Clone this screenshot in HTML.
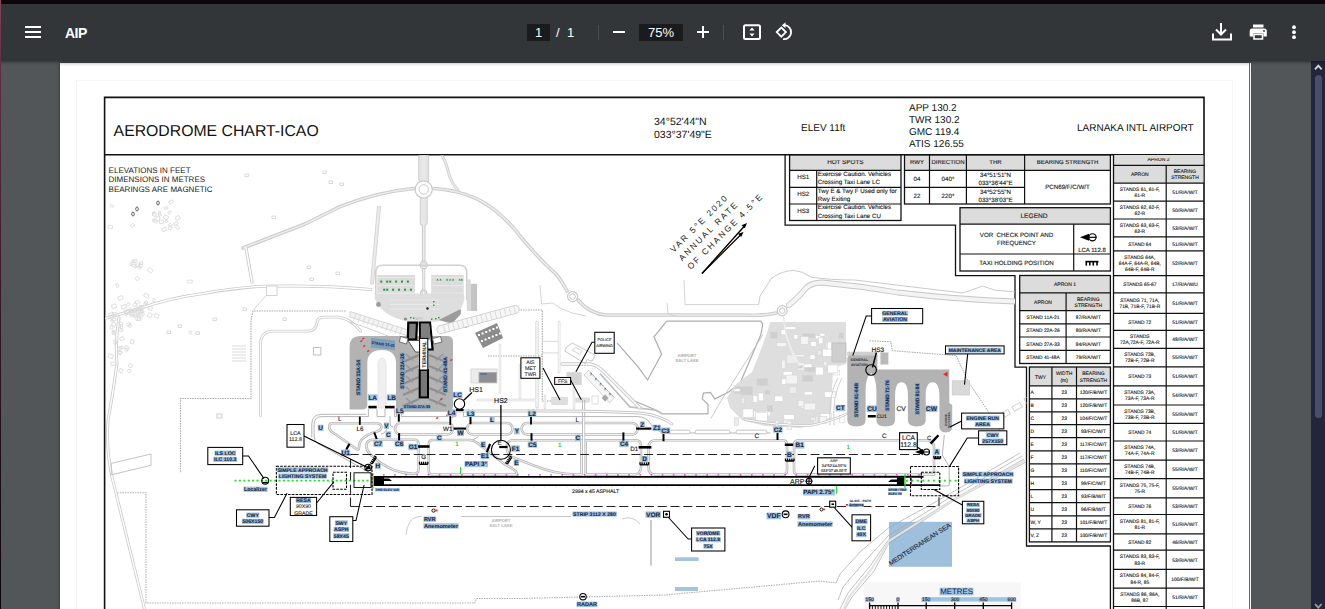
<!DOCTYPE html>
<html><head><meta charset="utf-8"><title>AIP</title>
<style>
html,body{margin:0;padding:0;width:1325px;height:609px;overflow:hidden;background:#525659;font-family:"Liberation Sans",sans-serif;}
#topbar{position:absolute;left:0;top:0;width:1325px;height:4px;background:#0d070b;}
#leftedge{position:absolute;left:0;top:0;width:1px;height:609px;background:linear-gradient(#8a4258,#6a2c42 60px,#3a1824 300px,#0a0507);z-index:9;}
#toolbar{position:absolute;left:0;top:4px;width:1325px;height:57px;background:#323639;box-shadow:0 1px 3px rgba(0,0,0,.45);z-index:5;color:#fff;}
#toolbar .title{position:absolute;left:65px;top:21px;font-size:14px;font-weight:bold;letter-spacing:-0.5px;}
#page{position:absolute;left:60px;top:63px;width:1189px;height:560px;background:#fff;box-shadow:0 0 3px rgba(0,0,0,.5);}
#pedge{position:absolute;left:1249px;top:63px;width:1px;height:560px;background:#6a6a6a;border-right:1px solid #f2f2f2;}
#pgrad{position:absolute;left:60px;top:63px;width:1189px;height:4px;background:linear-gradient(#e9e9e9,#fff);}
#scroll{position:absolute;left:1311px;top:61px;width:14px;height:548px;background:#23263a;}
#thumb{position:absolute;left:4px;top:14px;width:7px;height:343px;border-radius:3.5px;background:#4a4e6b;}
.tb{position:absolute;font-size:13px;color:#fff;}
.box{position:absolute;background:#191b1c;color:#fff;font-size:13px;text-align:center;}
svg{position:absolute;left:0;top:0;}
</style></head><body>
<div id="topbar"></div><div id="leftedge"></div>
<div id="page"></div><div id="pedge"></div><div id="pgrad"></div>
<!--CHART-->
<svg id="chart" width="1325" height="609" viewBox="0 0 1325 609" font-family="Liberation Sans, sans-serif" text-rendering="geometricPrecision">
<rect x="76.5" y="80.5" width="1156.0" height="559.5" fill="none" stroke="#f6f6f6" stroke-width="1" />
<rect x="863.5" y="582.0" width="157.2" height="27.0" fill="#f7f7f7" stroke="none" stroke-width="1" />
<path d="M104.6 609V97.4H1204V609" stroke="#111" stroke-width="1.6" fill="none" />
<path d="M104.6 154.8L1204.0 154.8" stroke="#111" stroke-width="1.6" fill="none" />
<text x="113.6" y="136.2" font-size="15.8" text-anchor="start" fill="#111" >AERODROME CHART-ICAO</text>
<text x="654.0" y="125.3" font-size="10.5" text-anchor="start" fill="#111" >34°52'44"N</text>
<text x="654.0" y="138.1" font-size="10.5" text-anchor="start" fill="#111" >033°37'49"E</text>
<text x="801.0" y="130.8" font-size="10" text-anchor="start" fill="#111" >ELEV 11ft</text>
<text x="909.0" y="111.2" font-size="10" text-anchor="start" fill="#111" >APP 130.2</text>
<text x="909.0" y="123.2" font-size="10" text-anchor="start" fill="#111" >TWR 130.2</text>
<text x="909.0" y="135.2" font-size="10" text-anchor="start" fill="#111" >GMC 119.4</text>
<text x="909.0" y="147.2" font-size="10" text-anchor="start" fill="#111" >ATIS 126.55</text>
<text x="1077.0" y="131.0" font-size="10" text-anchor="start" fill="#111" >LARNAKA INTL AIRPORT</text>
<text x="108.6" y="172.8" font-size="8" text-anchor="start" fill="#222" >ELEVATIONS IN FEET</text>
<text x="108.6" y="182.3" font-size="8" text-anchor="start" fill="#222" >DIMENSIONS IN METRES</text>
<text x="108.6" y="191.8" font-size="8" text-anchor="start" fill="#222" >BEARINGS ARE MAGNETIC</text>
<path d="M785.1 154.8V225.2H955.5V275.6H1015V367.2H1026.5V546H1110.400V609" stroke="#111" stroke-width="1.3" fill="none" />
<rect x="789.6" y="155.0" width="111.4" height="15.3" fill="#dcdcdc" stroke="none" stroke-width="1" />
<rect x="789.6" y="155.0" width="111.4" height="65.5" fill="none" stroke="#111" stroke-width="1.3" />
<path d="M789.6 170.3L901.0 170.3" stroke="#111" stroke-width="1.2" fill="none" />
<path d="M789.6 187.4L901.0 187.4" stroke="#111" stroke-width="1.2" fill="none" />
<path d="M789.6 204.0L901.0 204.0" stroke="#111" stroke-width="1.2" fill="none" />
<path d="M816.7 170.3L816.7 220.5" stroke="#111" stroke-width="1.2" fill="none" />
<text x="803.2" y="179.0" font-size="6.2" text-anchor="middle" fill="#222" stroke="#222" stroke-width="0.13" >HS1</text>
<text x="817.8" y="175.8" font-size="6.2" text-anchor="start" fill="#222" stroke="#222" stroke-width="0.13" >Exercise Caution. Vehicles</text>
<text x="817.8" y="183.9" font-size="6.2" text-anchor="start" fill="#222" stroke="#222" stroke-width="0.13" >Crossing Taxi Lane LC</text>
<text x="803.2" y="195.8" font-size="6.2" text-anchor="middle" fill="#222" stroke="#222" stroke-width="0.13" >HS2</text>
<text x="817.8" y="192.6" font-size="6.2" text-anchor="start" fill="#222" stroke="#222" stroke-width="0.13" >Twy E &amp; Twy F Used only for</text>
<text x="817.8" y="200.7" font-size="6.2" text-anchor="start" fill="#222" stroke="#222" stroke-width="0.13" >Rwy Exiting</text>
<text x="803.2" y="212.6" font-size="6.2" text-anchor="middle" fill="#222" stroke="#222" stroke-width="0.13" >HS3</text>
<text x="817.8" y="209.4" font-size="6.2" text-anchor="start" fill="#222" stroke="#222" stroke-width="0.13" >Exercise Caution. Vehicles</text>
<text x="817.8" y="217.5" font-size="6.2" text-anchor="start" fill="#222" stroke="#222" stroke-width="0.13" >Crossing Taxi Lane CU</text>
<rect x="904.5" y="155.0" width="205.9" height="15.3" fill="#dcdcdc" stroke="none" stroke-width="1" />
<rect x="904.5" y="155.0" width="205.9" height="49.0" fill="none" stroke="#111" stroke-width="1.3" />
<path d="M904.5 170.3L1110.4 170.3" stroke="#111" stroke-width="1.2" fill="none" />
<path d="M904.5 187.4L1024.6 187.4" stroke="#111" stroke-width="1.2" fill="none" />
<path d="M929.5 155.0L929.5 204.0" stroke="#111" stroke-width="1.2" fill="none" />
<path d="M966.4 155.0L966.4 204.0" stroke="#111" stroke-width="1.2" fill="none" />
<path d="M1024.6 155.0L1024.6 204.0" stroke="#111" stroke-width="1.2" fill="none" />
<text x="917.0" y="181.3" font-size="6.2" text-anchor="middle" fill="#222" stroke="#222" stroke-width="0.13" >04</text>
<text x="948.0" y="181.3" font-size="6.2" text-anchor="middle" fill="#222" stroke="#222" stroke-width="0.13" >040°</text>
<text x="995.5" y="177.3" font-size="6.2" text-anchor="middle" fill="#222" stroke="#222" stroke-width="0.13" >34°51'51"N</text>
<text x="995.5" y="185.3" font-size="6.2" text-anchor="middle" fill="#222" stroke="#222" stroke-width="0.13" >033°36'44"E</text>
<text x="917.0" y="198.3" font-size="6.2" text-anchor="middle" fill="#222" stroke="#222" stroke-width="0.13" >22</text>
<text x="948.0" y="198.3" font-size="6.2" text-anchor="middle" fill="#222" stroke="#222" stroke-width="0.13" >220°</text>
<text x="995.5" y="194.3" font-size="6.2" text-anchor="middle" fill="#222" stroke="#222" stroke-width="0.13" >34°52'55"N</text>
<text x="995.5" y="202.3" font-size="6.2" text-anchor="middle" fill="#222" stroke="#222" stroke-width="0.13" >033°38'03"E</text>
<text x="1067.5" y="189.3" font-size="6.2" text-anchor="middle" fill="#222" stroke="#222" stroke-width="0.13" >PCN69/F/C/W/T</text>
<rect x="960.0" y="207.7" width="150.4" height="16.4" fill="#dcdcdc" stroke="none" stroke-width="1" />
<rect x="960.0" y="207.7" width="150.4" height="63.3" fill="none" stroke="#111" stroke-width="1.3" />
<path d="M960.0 224.1L1110.4 224.1" stroke="#111" stroke-width="1.2" fill="none" />
<path d="M960.0 254.0L1110.4 254.0" stroke="#111" stroke-width="1.2" fill="none" />
<path d="M1073.7 224.1L1073.7 271.0" stroke="#111" stroke-width="1.2" fill="none" />
<text x="1034.0" y="218.2" font-size="6.6" text-anchor="middle" fill="#222" stroke="#222" stroke-width="0.13" >LEGEND</text>
<text x="1016.5" y="236.7" font-size="6.2" text-anchor="middle" fill="#222" stroke="#222" stroke-width="0.13" >VOR  CHECK POINT AND</text>
<text x="1016.5" y="245.0" font-size="6.2" text-anchor="middle" fill="#222" stroke="#222" stroke-width="0.13" >FREQUENCY</text>
<text x="1016.5" y="265.0" font-size="6.2" text-anchor="middle" fill="#222" stroke="#222" stroke-width="0.13" >TAXI HOLDING POSITION</text>
<text x="1092.0" y="252.0" font-size="6" text-anchor="middle" fill="#222" stroke="#222" stroke-width="0.13" >LCA 112.8</text>
<circle cx="1092.5" cy="237.3" r="3.6" fill="#fff" stroke="#000" stroke-width="1.1"/>
<path d="M1080 237.3L1089 233.8V240.8Z" stroke="none" stroke-width="1" fill="#000" />
<path d="M1086.0 237.3L1096.5 237.3" stroke="#000" stroke-width="1.2" fill="none" />
<path d="M1085.5 261.6L1098.5 261.6" stroke="#000" stroke-width="1.6" fill="none" />
<path d="M1086.3 261.6L1086.3 265.6" stroke="#000" stroke-width="1.6" fill="none" />
<path d="M1089.8 261.6L1089.8 265.6" stroke="#000" stroke-width="1.6" fill="none" />
<path d="M1093.3 261.6L1093.3 265.6" stroke="#000" stroke-width="1.6" fill="none" />
<path d="M1097.0 261.6L1097.0 265.6" stroke="#000" stroke-width="1.6" fill="none" />
<rect x="1019.7" y="275.5" width="90.7" height="35.1" fill="#dcdcdc" stroke="none" stroke-width="1" />
<rect x="1019.7" y="275.5" width="90.7" height="88.0" fill="none" stroke="#111" stroke-width="1.3" />
<path d="M1019.7 292.9L1110.4 292.9" stroke="#111" stroke-width="1.2" fill="none" />
<path d="M1019.7 310.6L1110.4 310.6" stroke="#111" stroke-width="1.2" fill="none" />
<path d="M1019.7 323.8L1110.4 323.8" stroke="#111" stroke-width="1.2" fill="none" />
<path d="M1019.7 337.0L1110.4 337.0" stroke="#111" stroke-width="1.2" fill="none" />
<path d="M1019.7 350.3L1110.4 350.3" stroke="#111" stroke-width="1.2" fill="none" />
<path d="M1066.1 292.9L1066.1 363.5" stroke="#111" stroke-width="1.2" fill="none" />
<text x="1065.0" y="286.0" font-size="5" text-anchor="middle" fill="#222" stroke="#222" stroke-width="0.13" >APRON 1</text>
<text x="1043.0" y="303.6" font-size="5" text-anchor="middle" fill="#222" stroke="#222" stroke-width="0.13" >APRON</text>
<text x="1088.3" y="300.6" font-size="5" text-anchor="middle" fill="#222" stroke="#222" stroke-width="0.13" >BEARING</text>
<text x="1088.3" y="306.6" font-size="5" text-anchor="middle" fill="#222" stroke="#222" stroke-width="0.13" >STRENGTH</text>
<text x="1043.0" y="319.1" font-size="4.9" text-anchor="middle" fill="#222" stroke="#222" stroke-width="0.13" >STAND 11A-21</text>
<text x="1088.3" y="319.1" font-size="4.9" text-anchor="middle" fill="#222" stroke="#222" stroke-width="0.13" >87/R/A/W/T</text>
<text x="1043.0" y="332.3" font-size="4.9" text-anchor="middle" fill="#222" stroke="#222" stroke-width="0.13" >STAND 22A-26</text>
<text x="1088.3" y="332.3" font-size="4.9" text-anchor="middle" fill="#222" stroke="#222" stroke-width="0.13" >80/R/A/W/T</text>
<text x="1043.0" y="345.5" font-size="4.9" text-anchor="middle" fill="#222" stroke="#222" stroke-width="0.13" >STAND 27A-33</text>
<text x="1088.3" y="345.5" font-size="4.9" text-anchor="middle" fill="#222" stroke="#222" stroke-width="0.13" >84/R/A/W/T</text>
<text x="1043.0" y="358.7" font-size="4.9" text-anchor="middle" fill="#222" stroke="#222" stroke-width="0.13" >STAND 41-48A</text>
<text x="1088.3" y="358.7" font-size="4.9" text-anchor="middle" fill="#222" stroke="#222" stroke-width="0.13" >79/R/A/W/T</text>
<rect x="1029.4" y="367.0" width="81.0" height="18.8" fill="#dcdcdc" stroke="none" stroke-width="1" />
<rect x="1029.4" y="367.0" width="81.0" height="174.9" fill="none" stroke="#111" stroke-width="1.3" />
<path d="M1029.4 385.8L1110.4 385.8" stroke="#111" stroke-width="1.2" fill="none" />
<path d="M1029.4 398.8L1110.4 398.8" stroke="#111" stroke-width="1.2" fill="none" />
<path d="M1029.4 411.9L1110.4 411.9" stroke="#111" stroke-width="1.2" fill="none" />
<path d="M1029.4 424.6L1110.4 424.6" stroke="#111" stroke-width="1.2" fill="none" />
<path d="M1029.4 437.7L1110.4 437.7" stroke="#111" stroke-width="1.2" fill="none" />
<path d="M1029.4 450.8L1110.4 450.8" stroke="#111" stroke-width="1.2" fill="none" />
<path d="M1029.4 463.8L1110.4 463.8" stroke="#111" stroke-width="1.2" fill="none" />
<path d="M1029.4 476.9L1110.4 476.9" stroke="#111" stroke-width="1.2" fill="none" />
<path d="M1029.4 489.6L1110.4 489.6" stroke="#111" stroke-width="1.2" fill="none" />
<path d="M1029.4 502.7L1110.4 502.7" stroke="#111" stroke-width="1.2" fill="none" />
<path d="M1029.4 515.8L1110.4 515.8" stroke="#111" stroke-width="1.2" fill="none" />
<path d="M1029.4 528.8L1110.4 528.8" stroke="#111" stroke-width="1.2" fill="none" />
<path d="M1051.9 367.0L1051.9 541.9" stroke="#111" stroke-width="1.2" fill="none" />
<path d="M1076.5 367.0L1076.5 541.9" stroke="#111" stroke-width="1.2" fill="none" />
<text x="1040.6" y="378.8" font-size="5" text-anchor="middle" fill="#222" stroke="#222" stroke-width="0.13" >TWY</text>
<text x="1064.2" y="375.3" font-size="5" text-anchor="middle" fill="#222" stroke="#222" stroke-width="0.13" >WIDTH</text>
<text x="1064.2" y="381.5" font-size="5" text-anchor="middle" fill="#222" stroke="#222" stroke-width="0.13" >(m)</text>
<text x="1093.4" y="375.3" font-size="5" text-anchor="middle" fill="#222" stroke="#222" stroke-width="0.13" >BEARING</text>
<text x="1093.4" y="381.5" font-size="5" text-anchor="middle" fill="#222" stroke="#222" stroke-width="0.13" >STRENGTH</text>
<text x="1030.6" y="394.1" font-size="4.9" text-anchor="start" fill="#222" stroke="#222" stroke-width="0.13" >A</text>
<text x="1064.2" y="394.1" font-size="4.9" text-anchor="middle" fill="#222" stroke="#222" stroke-width="0.13" >23</text>
<text x="1093.4" y="394.1" font-size="4.9" text-anchor="middle" fill="#222" stroke="#222" stroke-width="0.13" >120/F/B/W/T</text>
<text x="1030.6" y="407.2" font-size="4.9" text-anchor="start" fill="#222" stroke="#222" stroke-width="0.13" >B</text>
<text x="1064.2" y="407.2" font-size="4.9" text-anchor="middle" fill="#222" stroke="#222" stroke-width="0.13" >23</text>
<text x="1093.4" y="407.2" font-size="4.9" text-anchor="middle" fill="#222" stroke="#222" stroke-width="0.13" >120/F/B/W/T</text>
<text x="1030.6" y="420.1" font-size="4.9" text-anchor="start" fill="#222" stroke="#222" stroke-width="0.13" >C</text>
<text x="1064.2" y="420.1" font-size="4.9" text-anchor="middle" fill="#222" stroke="#222" stroke-width="0.13" >23</text>
<text x="1093.4" y="420.1" font-size="4.9" text-anchor="middle" fill="#222" stroke="#222" stroke-width="0.13" >104/F/C/W/T</text>
<text x="1030.6" y="432.9" font-size="4.9" text-anchor="start" fill="#222" stroke="#222" stroke-width="0.13" >D</text>
<text x="1064.2" y="432.9" font-size="4.9" text-anchor="middle" fill="#222" stroke="#222" stroke-width="0.13" >23</text>
<text x="1093.4" y="432.9" font-size="4.9" text-anchor="middle" fill="#222" stroke="#222" stroke-width="0.13" >93/F/C/W/T</text>
<text x="1030.6" y="446.1" font-size="4.9" text-anchor="start" fill="#222" stroke="#222" stroke-width="0.13" >E</text>
<text x="1064.2" y="446.1" font-size="4.9" text-anchor="middle" fill="#222" stroke="#222" stroke-width="0.13" >23</text>
<text x="1093.4" y="446.1" font-size="4.9" text-anchor="middle" fill="#222" stroke="#222" stroke-width="0.13" >117/F/C/W/T</text>
<text x="1030.6" y="459.1" font-size="4.9" text-anchor="start" fill="#222" stroke="#222" stroke-width="0.13" >F</text>
<text x="1064.2" y="459.1" font-size="4.9" text-anchor="middle" fill="#222" stroke="#222" stroke-width="0.13" >23</text>
<text x="1093.4" y="459.1" font-size="4.9" text-anchor="middle" fill="#222" stroke="#222" stroke-width="0.13" >117/F/C/W/T</text>
<text x="1030.6" y="472.2" font-size="4.9" text-anchor="start" fill="#222" stroke="#222" stroke-width="0.13" >G</text>
<text x="1064.2" y="472.2" font-size="4.9" text-anchor="middle" fill="#222" stroke="#222" stroke-width="0.13" >23</text>
<text x="1093.4" y="472.2" font-size="4.9" text-anchor="middle" fill="#222" stroke="#222" stroke-width="0.13" >110/F/C/W/T</text>
<text x="1030.6" y="485.1" font-size="4.9" text-anchor="start" fill="#222" stroke="#222" stroke-width="0.13" >H</text>
<text x="1064.2" y="485.1" font-size="4.9" text-anchor="middle" fill="#222" stroke="#222" stroke-width="0.13" >23</text>
<text x="1093.4" y="485.1" font-size="4.9" text-anchor="middle" fill="#222" stroke="#222" stroke-width="0.13" >99/F/C/W/T</text>
<text x="1030.6" y="497.9" font-size="4.9" text-anchor="start" fill="#222" stroke="#222" stroke-width="0.13" >L</text>
<text x="1064.2" y="497.9" font-size="4.9" text-anchor="middle" fill="#222" stroke="#222" stroke-width="0.13" >23</text>
<text x="1093.4" y="497.9" font-size="4.9" text-anchor="middle" fill="#222" stroke="#222" stroke-width="0.13" >93/F/B/W/T</text>
<text x="1030.6" y="511.1" font-size="4.9" text-anchor="start" fill="#222" stroke="#222" stroke-width="0.13" >U</text>
<text x="1064.2" y="511.1" font-size="4.9" text-anchor="middle" fill="#222" stroke="#222" stroke-width="0.13" >23</text>
<text x="1093.4" y="511.1" font-size="4.9" text-anchor="middle" fill="#222" stroke="#222" stroke-width="0.13" >96/F/B/W/T</text>
<text x="1030.6" y="524.1" font-size="4.9" text-anchor="start" fill="#222" stroke="#222" stroke-width="0.13" >W, Y</text>
<text x="1064.2" y="524.1" font-size="4.9" text-anchor="middle" fill="#222" stroke="#222" stroke-width="0.13" >23</text>
<text x="1093.4" y="524.1" font-size="4.9" text-anchor="middle" fill="#222" stroke="#222" stroke-width="0.13" >101/F/B/W/T</text>
<text x="1030.6" y="537.1" font-size="4.9" text-anchor="start" fill="#222" stroke="#222" stroke-width="0.13" >V, Z</text>
<text x="1064.2" y="537.1" font-size="4.9" text-anchor="middle" fill="#222" stroke="#222" stroke-width="0.13" >23</text>
<text x="1093.4" y="537.1" font-size="4.9" text-anchor="middle" fill="#222" stroke="#222" stroke-width="0.13" >100/F/B/W/T</text>
<rect x="1113.5" y="155.0" width="89.9" height="28.1" fill="#dcdcdc" stroke="none" stroke-width="1" />
<path d="M1113.5 155.0L1113.5 609.0" stroke="#111" stroke-width="1.3" fill="none" />
<path d="M1113.5 165.4L1204.0 165.4" stroke="#111" stroke-width="1.2" fill="none" />
<path d="M1113.5 183.1L1204.0 183.1" stroke="#111" stroke-width="1.2" fill="none" />
<path d="M1113.5 201.2L1204.0 201.2" stroke="#111" stroke-width="1.2" fill="none" />
<path d="M1113.5 219.0L1204.0 219.0" stroke="#111" stroke-width="1.2" fill="none" />
<path d="M1113.5 236.9L1204.0 236.9" stroke="#111" stroke-width="1.2" fill="none" />
<path d="M1113.5 250.8L1204.0 250.8" stroke="#111" stroke-width="1.2" fill="none" />
<path d="M1113.5 275.6L1204.0 275.6" stroke="#111" stroke-width="1.2" fill="none" />
<path d="M1113.5 292.9L1204.0 292.9" stroke="#111" stroke-width="1.2" fill="none" />
<path d="M1113.5 313.3L1204.0 313.3" stroke="#111" stroke-width="1.2" fill="none" />
<path d="M1113.5 330.3L1204.0 330.3" stroke="#111" stroke-width="1.2" fill="none" />
<path d="M1113.5 348.4L1204.0 348.4" stroke="#111" stroke-width="1.2" fill="none" />
<path d="M1113.5 366.8L1204.0 366.8" stroke="#111" stroke-width="1.2" fill="none" />
<path d="M1113.5 385.8L1204.0 385.8" stroke="#111" stroke-width="1.2" fill="none" />
<path d="M1113.5 405.0L1204.0 405.0" stroke="#111" stroke-width="1.2" fill="none" />
<path d="M1113.5 423.4L1204.0 423.4" stroke="#111" stroke-width="1.2" fill="none" />
<path d="M1113.5 441.0L1204.0 441.0" stroke="#111" stroke-width="1.2" fill="none" />
<path d="M1113.5 460.2L1204.0 460.2" stroke="#111" stroke-width="1.2" fill="none" />
<path d="M1113.5 478.6L1204.0 478.6" stroke="#111" stroke-width="1.2" fill="none" />
<path d="M1113.5 497.8L1204.0 497.8" stroke="#111" stroke-width="1.2" fill="none" />
<path d="M1113.5 514.5L1204.0 514.5" stroke="#111" stroke-width="1.2" fill="none" />
<path d="M1113.5 533.8L1204.0 533.8" stroke="#111" stroke-width="1.2" fill="none" />
<path d="M1113.5 550.1L1204.0 550.1" stroke="#111" stroke-width="1.2" fill="none" />
<path d="M1113.5 569.3L1204.0 569.3" stroke="#111" stroke-width="1.2" fill="none" />
<path d="M1113.5 588.1L1204.0 588.1" stroke="#111" stroke-width="1.2" fill="none" />
<path d="M1113.5 606.5L1204.0 606.5" stroke="#111" stroke-width="1.2" fill="none" />
<path d="M1166.2 165.4L1166.2 609.0" stroke="#111" stroke-width="1.2" fill="none" />
<text x="1139.8" y="176.0" font-size="5" text-anchor="middle" fill="#222" stroke="#222" stroke-width="0.13" >APRON</text>
<text x="1185.0" y="172.9" font-size="5" text-anchor="middle" fill="#222" stroke="#222" stroke-width="0.13" >BEARING</text>
<text x="1185.0" y="179.1" font-size="5" text-anchor="middle" fill="#222" stroke="#222" stroke-width="0.13" >STRENGTH</text>
<text x="1139.8" y="190.9" font-size="4.9" text-anchor="middle" fill="#222" stroke="#222" stroke-width="0.13" >STANDS 61, 61-F,</text>
<text x="1139.8" y="197.0" font-size="4.9" text-anchor="middle" fill="#222" stroke="#222" stroke-width="0.13" >61-R</text>
<text x="1185.0" y="193.9" font-size="4.9" text-anchor="middle" fill="#222" stroke="#222" stroke-width="0.13" >51/R/A/W/T</text>
<text x="1139.8" y="208.8" font-size="4.9" text-anchor="middle" fill="#222" stroke="#222" stroke-width="0.13" >STANDS 62, 62-F,</text>
<text x="1139.8" y="214.9" font-size="4.9" text-anchor="middle" fill="#222" stroke="#222" stroke-width="0.13" >62-R</text>
<text x="1185.0" y="211.9" font-size="4.9" text-anchor="middle" fill="#222" stroke="#222" stroke-width="0.13" >50/R/A/W/T</text>
<text x="1139.8" y="226.7" font-size="4.9" text-anchor="middle" fill="#222" stroke="#222" stroke-width="0.13" >STANDS 63, 63-F,</text>
<text x="1139.8" y="232.8" font-size="4.9" text-anchor="middle" fill="#222" stroke="#222" stroke-width="0.13" >63-R</text>
<text x="1185.0" y="229.8" font-size="4.9" text-anchor="middle" fill="#222" stroke="#222" stroke-width="0.13" >53/R/A/W/T</text>
<text x="1139.8" y="245.6" font-size="4.9" text-anchor="middle" fill="#222" stroke="#222" stroke-width="0.13" >STAND 64</text>
<text x="1185.0" y="245.7" font-size="4.9" text-anchor="middle" fill="#222" stroke="#222" stroke-width="0.13" >51/R/A/W/T</text>
<text x="1139.8" y="258.9" font-size="4.9" text-anchor="middle" fill="#222" stroke="#222" stroke-width="0.13" >STANDS 64A,</text>
<text x="1139.8" y="265.0" font-size="4.9" text-anchor="middle" fill="#222" stroke="#222" stroke-width="0.13" >64A-F, 64A-R, 64B,</text>
<text x="1139.8" y="271.1" font-size="4.9" text-anchor="middle" fill="#222" stroke="#222" stroke-width="0.13" >64B-F, 64B-R</text>
<text x="1185.0" y="265.0" font-size="4.9" text-anchor="middle" fill="#222" stroke="#222" stroke-width="0.13" >52/R/A/W/T</text>
<text x="1139.8" y="286.0" font-size="4.9" text-anchor="middle" fill="#222" stroke="#222" stroke-width="0.13" >STANDS 65-67</text>
<text x="1185.0" y="286.1" font-size="4.9" text-anchor="middle" fill="#222" stroke="#222" stroke-width="0.13" >17/R/A/W/U</text>
<text x="1139.8" y="301.8" font-size="4.9" text-anchor="middle" fill="#222" stroke="#222" stroke-width="0.13" >STANDS 71, 71A,</text>
<text x="1139.8" y="307.9" font-size="4.9" text-anchor="middle" fill="#222" stroke="#222" stroke-width="0.13" >71B, 71B-F, 71B-R</text>
<text x="1185.0" y="304.9" font-size="4.9" text-anchor="middle" fill="#222" stroke="#222" stroke-width="0.13" >51/R/A/W/T</text>
<text x="1139.8" y="323.6" font-size="4.9" text-anchor="middle" fill="#222" stroke="#222" stroke-width="0.13" >STAND 72</text>
<text x="1185.0" y="323.6" font-size="4.9" text-anchor="middle" fill="#222" stroke="#222" stroke-width="0.13" >51/R/A/W/T</text>
<text x="1139.8" y="338.1" font-size="4.9" text-anchor="middle" fill="#222" stroke="#222" stroke-width="0.13" >STANDS</text>
<text x="1139.8" y="344.2" font-size="4.9" text-anchor="middle" fill="#222" stroke="#222" stroke-width="0.13" >72A,72A-F, 72A-R</text>
<text x="1185.0" y="341.2" font-size="4.9" text-anchor="middle" fill="#222" stroke="#222" stroke-width="0.13" >48/R/A/W/T</text>
<text x="1139.8" y="356.3" font-size="4.9" text-anchor="middle" fill="#222" stroke="#222" stroke-width="0.13" >STANDS 72B,</text>
<text x="1139.8" y="362.4" font-size="4.9" text-anchor="middle" fill="#222" stroke="#222" stroke-width="0.13" >72B-F, 72B-R</text>
<text x="1185.0" y="359.4" font-size="4.9" text-anchor="middle" fill="#222" stroke="#222" stroke-width="0.13" >55/R/A/W/T</text>
<text x="1139.8" y="378.1" font-size="4.9" text-anchor="middle" fill="#222" stroke="#222" stroke-width="0.13" >STAND 73</text>
<text x="1185.0" y="378.1" font-size="4.9" text-anchor="middle" fill="#222" stroke="#222" stroke-width="0.13" >51/R/A/W/T</text>
<text x="1139.8" y="394.1" font-size="4.9" text-anchor="middle" fill="#222" stroke="#222" stroke-width="0.13" >STANDS 73A,</text>
<text x="1139.8" y="400.2" font-size="4.9" text-anchor="middle" fill="#222" stroke="#222" stroke-width="0.13" >73A-F, 73A-R</text>
<text x="1185.0" y="397.2" font-size="4.9" text-anchor="middle" fill="#222" stroke="#222" stroke-width="0.13" >54/R/A/W/T</text>
<text x="1139.8" y="412.9" font-size="4.9" text-anchor="middle" fill="#222" stroke="#222" stroke-width="0.13" >STANDS 73B,</text>
<text x="1139.8" y="419.0" font-size="4.9" text-anchor="middle" fill="#222" stroke="#222" stroke-width="0.13" >73B-F, 73B-R</text>
<text x="1185.0" y="416.0" font-size="4.9" text-anchor="middle" fill="#222" stroke="#222" stroke-width="0.13" >55/R/A/W/T</text>
<text x="1139.8" y="434.0" font-size="4.9" text-anchor="middle" fill="#222" stroke="#222" stroke-width="0.13" >STAND 74</text>
<text x="1185.0" y="434.0" font-size="4.9" text-anchor="middle" fill="#222" stroke="#222" stroke-width="0.13" >51/R/A/W/T</text>
<text x="1139.8" y="449.3" font-size="4.9" text-anchor="middle" fill="#222" stroke="#222" stroke-width="0.13" >STANDS 74A,</text>
<text x="1139.8" y="455.4" font-size="4.9" text-anchor="middle" fill="#222" stroke="#222" stroke-width="0.13" >74A-F, 74A-R</text>
<text x="1185.0" y="452.4" font-size="4.9" text-anchor="middle" fill="#222" stroke="#222" stroke-width="0.13" >53/R/A/W/T</text>
<text x="1139.8" y="468.1" font-size="4.9" text-anchor="middle" fill="#222" stroke="#222" stroke-width="0.13" >STANDS 74B,</text>
<text x="1139.8" y="474.2" font-size="4.9" text-anchor="middle" fill="#222" stroke="#222" stroke-width="0.13" >74B-F, 74B-R</text>
<text x="1185.0" y="471.2" font-size="4.9" text-anchor="middle" fill="#222" stroke="#222" stroke-width="0.13" >55/R/A/W/T</text>
<text x="1139.8" y="486.9" font-size="4.9" text-anchor="middle" fill="#222" stroke="#222" stroke-width="0.13" >STANDS 75, 75-F,</text>
<text x="1139.8" y="493.0" font-size="4.9" text-anchor="middle" fill="#222" stroke="#222" stroke-width="0.13" >75-R</text>
<text x="1185.0" y="490.0" font-size="4.9" text-anchor="middle" fill="#222" stroke="#222" stroke-width="0.13" >55/R/A/W/T</text>
<text x="1139.8" y="507.9" font-size="4.9" text-anchor="middle" fill="#222" stroke="#222" stroke-width="0.13" >STAND 76</text>
<text x="1185.0" y="507.9" font-size="4.9" text-anchor="middle" fill="#222" stroke="#222" stroke-width="0.13" >53/R/A/W/T</text>
<text x="1139.8" y="522.9" font-size="4.9" text-anchor="middle" fill="#222" stroke="#222" stroke-width="0.13" >STANDS 81, 81-F,</text>
<text x="1139.8" y="529.0" font-size="4.9" text-anchor="middle" fill="#222" stroke="#222" stroke-width="0.13" >81-R</text>
<text x="1185.0" y="525.9" font-size="4.9" text-anchor="middle" fill="#222" stroke="#222" stroke-width="0.13" >51/R/A/W/T</text>
<text x="1139.8" y="543.7" font-size="4.9" text-anchor="middle" fill="#222" stroke="#222" stroke-width="0.13" >STAND 82</text>
<text x="1185.0" y="543.8" font-size="4.9" text-anchor="middle" fill="#222" stroke="#222" stroke-width="0.13" >46/R/A/W/T</text>
<text x="1139.8" y="558.4" font-size="4.9" text-anchor="middle" fill="#222" stroke="#222" stroke-width="0.13" >STANDS 83, 83-F,</text>
<text x="1139.8" y="564.5" font-size="4.9" text-anchor="middle" fill="#222" stroke="#222" stroke-width="0.13" >83-R</text>
<text x="1185.0" y="561.5" font-size="4.9" text-anchor="middle" fill="#222" stroke="#222" stroke-width="0.13" >53/R/A/W/T</text>
<text x="1139.8" y="577.4" font-size="4.9" text-anchor="middle" fill="#222" stroke="#222" stroke-width="0.13" >STANDS 84, 84-F,</text>
<text x="1139.8" y="583.5" font-size="4.9" text-anchor="middle" fill="#222" stroke="#222" stroke-width="0.13" >84-R, 85</text>
<text x="1185.0" y="580.5" font-size="4.9" text-anchor="middle" fill="#222" stroke="#222" stroke-width="0.13" >100/F/B/W/T</text>
<text x="1139.8" y="596.0" font-size="4.9" text-anchor="middle" fill="#222" stroke="#222" stroke-width="0.13" >STANDS 86, 86A,</text>
<text x="1139.8" y="602.1" font-size="4.9" text-anchor="middle" fill="#222" stroke="#222" stroke-width="0.13" >86B, 87</text>
<text x="1185.0" y="599.1" font-size="4.9" text-anchor="middle" fill="#222" stroke="#222" stroke-width="0.13" >51/R/A/W/T</text>
<clipPath id="clipH"><rect x="780" y="160.2" width="440" height="40"/></clipPath>
<g clip-path="url(#clipH)">
<text x="845.3" y="163.9" font-size="6.3" text-anchor="middle" fill="#222" stroke="#222" stroke-width="0.13" >HOT SPOTS</text>
<text x="917.0" y="163.9" font-size="6" text-anchor="middle" fill="#222" stroke="#222" stroke-width="0.13" >RWY</text>
<text x="948.0" y="163.9" font-size="6" text-anchor="middle" fill="#222" stroke="#222" stroke-width="0.13" >DIRECTION</text>
<text x="995.5" y="163.9" font-size="6" text-anchor="middle" fill="#222" stroke="#222" stroke-width="0.13" >THR</text>
<text x="1067.5" y="163.9" font-size="6" text-anchor="middle" fill="#222" stroke="#222" stroke-width="0.13" >BEARING STRENGTH</text>
</g>
<clipPath id="clipA2"><rect x="1113" y="158.200" width="92" height="10"/></clipPath>
<g clip-path="url(#clipA2)">
<text x="1158.5" y="160.6" font-size="5" text-anchor="middle" fill="#222" stroke="#222" stroke-width="0.13" >APRON 2</text>
</g>
<clipPath id="clipM"><path d="M105.4 155.6H785.1V225.2H955.5V275.6H1015V367.2H1026.5V546H1110.400V609H105.4Z"/></clipPath>
<g clip-path="url(#clipM)">
<rect x="889.0" y="521.8" width="63.0" height="45.0" fill="#9ec0dc" stroke="none" stroke-width="1" />
<path d="M243 248L305 224L340 206.700Q377 191.900 414 188.500" stroke="#cbcbcb" stroke-width="3.6" fill="none" stroke-linecap="round" stroke-linejoin="round"/>
<path d="M423.700 150V180" stroke="#cfcfcf" stroke-width="11" fill="none" stroke-linecap="round" stroke-linejoin="round"/>
<path d="M423.700 150V180" stroke="#cfcfcf" stroke-width="5" fill="none" stroke-linecap="round" stroke-linejoin="round"/>
<path d="M423.700 198V222" stroke="#cfcfcf" stroke-width="8" fill="none" stroke-linecap="round" stroke-linejoin="round"/>
<path d="M423.700 222V262" stroke="#cbcbcb" stroke-width="3.6" fill="none" stroke-linecap="round" stroke-linejoin="round"/>
<path d="M423.700 268V290" stroke="#cfcfcf" stroke-width="3.2" fill="none" stroke-linecap="round" stroke-linejoin="round"/>
<path d="M434 188.500Q458 190 478 199.300Q502 212 520 236Q540 260 556 274Q562 281 567 291" stroke="#cbcbcb" stroke-width="3.6" fill="none" stroke-linecap="round" stroke-linejoin="round"/>
<path d="M438.500 150Q446 160 448.400 172Q451 183 458 190" stroke="#cfcfcf" stroke-width="3" fill="none" stroke-linecap="round" stroke-linejoin="round"/>
<path d="M578 300Q590 314 606 315H744Q765 316 776 313" stroke="#cbcbcb" stroke-width="3.6" fill="none" stroke-linecap="round" stroke-linejoin="round"/>
<path d="M789 305Q800 296 806 288Q812 282.500 822 282.500Q860 286 898 292.500Q957 299.500 1016 301.500" stroke="#c6c6c6" stroke-width="5.8" fill="none" stroke-linecap="round" stroke-linejoin="round"/>
<path d="M789 305Q800 296 806 288Q812 282.500 822 282.500Q860 286 898 292.500Q957 299.500 1016 301.500" stroke="#cdcdcd" stroke-width="2.2" fill="none" stroke-linecap="round" stroke-linejoin="round"/>
<path d="M100 320L141 308Q170 298 203 293.500Q240 287 264 286.300Q320 285 371 289.500" stroke="#c9c9c9" stroke-width="3" fill="none" stroke-linecap="round" stroke-linejoin="round"/>
<path d="M119 318Q115 340 117 363Q112 400 108 420Q106 450 112 477L144.500 609" stroke="#c9c9c9" stroke-width="3" fill="none" stroke-linecap="round" stroke-linejoin="round"/>
<path d="M246 248L252 282" stroke="#c9c9c9" stroke-width="3.2" fill="none" stroke-linecap="round" stroke-linejoin="round"/>
<path d="M243 248L305 224L340 206.700Q377 191.900 414 188.500" stroke="#ececec" stroke-width="1.6" fill="none" stroke-linecap="round" stroke-linejoin="round"/>
<path d="M423.700 150V180" stroke="#e4e4e4" stroke-width="9" fill="none" stroke-linecap="round" stroke-linejoin="round"/>
<path d="M423.700 150V180" stroke="#e9e9e9" stroke-width="3" fill="none" stroke-linecap="round" stroke-linejoin="round"/>
<path d="M423.700 198V222" stroke="#e6e6e6" stroke-width="6" fill="none" stroke-linecap="round" stroke-linejoin="round"/>
<path d="M423.700 222V262" stroke="#ececec" stroke-width="1.6" fill="none" stroke-linecap="round" stroke-linejoin="round"/>
<path d="M423.700 268V290" stroke="#ececec" stroke-width="1.4" fill="none" stroke-linecap="round" stroke-linejoin="round"/>
<path d="M434 188.500Q458 190 478 199.300Q502 212 520 236Q540 260 556 274Q562 281 567 291" stroke="#ececec" stroke-width="1.6" fill="none" stroke-linecap="round" stroke-linejoin="round"/>
<path d="M438.500 150Q446 160 448.400 172Q451 183 458 190" stroke="#ececec" stroke-width="1.2" fill="none" stroke-linecap="round" stroke-linejoin="round"/>
<path d="M578 300Q590 314 606 315H744Q765 316 776 313" stroke="#ececec" stroke-width="1.6" fill="none" stroke-linecap="round" stroke-linejoin="round"/>
<path d="M789 305Q800 296 806 288Q812 282.500 822 282.500Q860 286 898 292.500Q957 299.500 1016 301.500" stroke="#f4f4f4" stroke-width="4.2" fill="none" stroke-linecap="round" stroke-linejoin="round"/>
<path d="M789 305Q800 296 806 288Q812 282.500 822 282.500Q860 286 898 292.500Q957 299.500 1016 301.500" stroke="#f4f4f4" stroke-width="0.8" fill="none" stroke-linecap="round" stroke-linejoin="round"/>
<path d="M100 320L141 308Q170 298 203 293.500Q240 287 264 286.300Q320 285 371 289.500" stroke="#fff" stroke-width="1.4" fill="none" stroke-linecap="round" stroke-linejoin="round"/>
<path d="M119 318Q115 340 117 363Q112 400 108 420Q106 450 112 477L144.500 609" stroke="#fff" stroke-width="1.4" fill="none" stroke-linecap="round" stroke-linejoin="round"/>
<path d="M246 248L252 282" stroke="#fff" stroke-width="1.5" fill="none" stroke-linecap="round" stroke-linejoin="round"/>
<circle cx="423.7" cy="189.4" r="8.6" fill="#fff" stroke="#c9c9c9" stroke-width="1.2"/>
<circle cx="423.7" cy="189.4" r="4.7" fill="#fff" stroke="#c9c9c9" stroke-width="1"/>
<circle cx="423.7" cy="265" r="3.6" fill="#fff" stroke="#c9c9c9" stroke-width="1.2"/>
<circle cx="423.7" cy="265" r="2.0" fill="#fff" stroke="#c9c9c9" stroke-width="1"/>
<circle cx="423.7" cy="292.9" r="3" fill="#fff" stroke="#c9c9c9" stroke-width="1.2"/>
<circle cx="423.7" cy="292.9" r="1.7" fill="#fff" stroke="#c9c9c9" stroke-width="1"/>
<circle cx="572.6" cy="296.6" r="5" fill="#fff" stroke="#c9c9c9" stroke-width="1.2"/>
<circle cx="572.6" cy="296.6" r="2.8" fill="#fff" stroke="#c9c9c9" stroke-width="1"/>
<circle cx="782.2" cy="310.6" r="5" fill="#fff" stroke="#c9c9c9" stroke-width="1.2"/>
<circle cx="782.2" cy="310.6" r="2.8" fill="#fff" stroke="#c9c9c9" stroke-width="1"/>
<path d="M377.500 206.700L380.500 206.700L373.500 284L370.500 284Z" stroke="#cdcdcd" stroke-width="0.8" fill="#ececec" />
<path d="M666.700 321.100H760.900L762.800 324.100L760.900 334.500L747.100 366.700L740.200 382.800L728.700 392L714.900 398.900L710.300 392.400L703.400 393.100L702.300 398.900L708 404.600V413.800H662.100L654 409.200L632.200 400" stroke="#adadad" stroke-width="1.2" fill="none" />
<path d="M666.700 321.100L654 336.800L661.600 354L647.600 380L637.900 366.700L617.200 343.200" stroke="#adadad" stroke-width="1.2" fill="none" />
<path d="M763 334.500L721 401L711 418.400" stroke="#c4c4c4" stroke-width="0.9" fill="none" />
<path d="M600 373.600L629.900 406.900L656.300 410.300L662.100 413.800" stroke="#c0c0c0" stroke-width="1.6" fill="none" />
<path d="M540 285L541.500 304L553 303L560 308L572 313L586 316" stroke="#cfcfcf" stroke-width="0.9" fill="none" />
<path d="M667 303L668 314L676 316" stroke="#cfcfcf" stroke-width="0.9" fill="none" />
<path d="M684 280L685 304.600H758.600" stroke="#cfcfcf" stroke-width="0.9" fill="none" />
<path d="M758.600 304.600L760 296L771.800 278Q782 271 793.500 270.300Q803 271 811.200 277.200Q830 280 854.500 280L962.900 293L982.600 286L994.400 290L1016 292" stroke="#c4c4c4" stroke-width="0.9" fill="none" />
<text x="687.0" y="357.0" font-size="4.2" text-anchor="middle" font-weight="bold" fill="#b2b2b2" stroke="#b2b2b2" stroke-width="0.08" >AIRPORT</text>
<text x="687.0" y="361.6" font-size="4.2" text-anchor="middle" font-weight="bold" fill="#b2b2b2" stroke="#b2b2b2" stroke-width="0.08" >SALT LAKE</text>
<text x="501.0" y="521.5" font-size="4.2" text-anchor="middle" font-weight="bold" fill="#b8b8b8" stroke="#b8b8b8" stroke-width="0.08" >AIRPORT</text>
<text x="501.0" y="526.5" font-size="4.2" text-anchor="middle" font-weight="bold" fill="#b8b8b8" stroke="#b8b8b8" stroke-width="0.08" >SALT LAKE</text>
<path d="M345.600 311H253L251 320V398.500H180.500V473" stroke="#a9a9a9" stroke-width="1.1" fill="none" stroke-dasharray="1.5 1"/>
<path d="M117.400 492.700H146V603H474.700L476.400 598.500H520L664.800 595L820 581L836.400 583" stroke="#b2b2b2" stroke-width="1.1" fill="none" stroke-dasharray="1.5 1"/>
<path d="M508 310H542.300V401H560" stroke="#a8a8a8" stroke-width="1.2" fill="none" stroke-dasharray="1.5 1"/>
<path d="M488 356H542" stroke="#a8a8a8" stroke-width="1.2" fill="none" stroke-dasharray="1.5 1"/>
<path d="M869.500 340.800L890.800 341.800L892.200 350.700L956.200 355.600L968 381.200L987.700 410.700L1000 430" stroke="#a6a6a6" stroke-width="1" fill="none" stroke-dasharray="1.5 1"/>
<path d="M260.600 415.500V343Q261 331.200 273.800 331.200H308Q316 331 317.200 322Q318 317.200 324 317.200H338Q350 318 360.700 331.200" stroke="#c9c9c9" stroke-width="2.8" fill="none" stroke-linecap="round" stroke-linejoin="round"/>
<path d="M260.600 415.500V343Q261 331.200 273.800 331.200H308Q316 331 317.200 322Q318 317.200 324 317.200H338Q350 318 360.700 331.200" stroke="#fff" stroke-width="1.2" fill="none" stroke-linecap="round" stroke-linejoin="round"/>
<rect x="313.5" y="347.5" width="7.4" height="7.5" fill="none" stroke="#c0c0c0" stroke-width="1" />
<rect x="217.0" y="414.0" width="5.0" height="4.0" fill="none" stroke="#c4c4c4" stroke-width="0.8" />
<path d="M111.300 463.400L151 454V465.300L111.300 474.800Z" stroke="#c4c4c4" stroke-width="1" fill="none" />
<rect x="130.2" y="312.1" width="4.0" height="2.1" fill="none" stroke="#dadada" stroke-width="0.800" transform="rotate(3 130.2 312.1)"/>
<rect x="130.5" y="310.5" width="3.5" height="2.1" fill="none" stroke="#dadada" stroke-width="0.800" transform="rotate(-5 130.5 310.5)"/>
<rect x="137.3" y="310.1" width="3.3" height="3.7" fill="none" stroke="#dadada" stroke-width="0.800" transform="rotate(-30 137.3 310.1)"/>
<rect x="135.6" y="317.3" width="4.8" height="3.2" fill="none" stroke="#dadada" stroke-width="0.800" transform="rotate(-8 135.6 317.3)"/>
<rect x="136.4" y="308.7" width="4.6" height="2.6" fill="none" stroke="#dadada" stroke-width="0.800" transform="rotate(-28 136.4 308.7)"/>
<rect x="140.0" y="312.5" width="4.4" height="2.4" fill="none" stroke="#dadada" stroke-width="0.800" transform="rotate(7 140.0 312.5)"/>
<rect x="126.2" y="304.6" width="3.6" height="2.1" fill="none" stroke="#dadada" stroke-width="0.800" transform="rotate(-35 126.2 304.6)"/>
<rect x="137.5" y="317.7" width="3.3" height="2.6" fill="none" stroke="#dadada" stroke-width="0.800" transform="rotate(7 137.5 317.7)"/>
<rect x="124.1" y="310.5" width="4.4" height="3.4" fill="none" stroke="#dadada" stroke-width="0.800" transform="rotate(-20 124.1 310.5)"/>
<rect x="121.0" y="305.7" width="4.6" height="3.5" fill="none" stroke="#dadada" stroke-width="0.800" transform="rotate(-17 121.0 305.7)"/>
<rect x="138.5" y="308.6" width="3.3" height="3.5" fill="none" stroke="#dadada" stroke-width="0.800" transform="rotate(-28 138.5 308.6)"/>
<rect x="129.9" y="309.1" width="4.0" height="3.5" fill="none" stroke="#dadada" stroke-width="0.800" transform="rotate(6 129.9 309.1)"/>
<rect x="139.8" y="305.3" width="4.1" height="3.2" fill="none" stroke="#dadada" stroke-width="0.800" transform="rotate(6 139.8 305.3)"/>
<rect x="112.7" y="312.1" width="4.8" height="2.9" fill="none" stroke="#dadada" stroke-width="0.800" transform="rotate(13 112.7 312.1)"/>
<rect x="148.9" y="312.5" width="3.9" height="4.0" fill="none" stroke="#dadada" stroke-width="0.800" transform="rotate(26 148.9 312.5)"/>
<rect x="130.7" y="314.8" width="4.0" height="2.0" fill="none" stroke="#dadada" stroke-width="0.800" transform="rotate(-3 130.7 314.8)"/>
<rect x="135.7" y="311.6" width="2.2" height="3.5" fill="none" stroke="#dadada" stroke-width="0.800" transform="rotate(-30 135.7 311.6)"/>
<rect x="133.2" y="315.0" width="4.6" height="2.2" fill="none" stroke="#dadada" stroke-width="0.800" transform="rotate(-4 133.2 315.0)"/>
<rect x="111.3" y="305.2" width="4.5" height="3.7" fill="none" stroke="#dadada" stroke-width="0.800" transform="rotate(-18 111.3 305.2)"/>
<rect x="124.1" y="311.9" width="4.7" height="3.9" fill="none" stroke="#dadada" stroke-width="0.800" transform="rotate(-28 124.1 311.9)"/>
<rect x="136.6" y="312.9" width="2.7" height="3.0" fill="none" stroke="#dadada" stroke-width="0.800" transform="rotate(7 136.6 312.9)"/>
<rect x="132.9" y="309.5" width="3.3" height="2.7" fill="none" stroke="#dadada" stroke-width="0.800" transform="rotate(5 132.9 309.5)"/>
<rect x="149.1" y="306.3" width="3.5" height="3.2" fill="none" stroke="#dadada" stroke-width="0.800" transform="rotate(14 149.1 306.3)"/>
<rect x="155.2" y="313.3" width="4.3" height="3.7" fill="none" stroke="#dadada" stroke-width="0.800" transform="rotate(24 155.2 313.3)"/>
<rect x="124.3" y="312.8" width="2.3" height="3.3" fill="none" stroke="#dadada" stroke-width="0.800" transform="rotate(-35 124.3 312.8)"/>
<rect x="139.9" y="310.7" width="2.5" height="2.7" fill="none" stroke="#dadada" stroke-width="0.800" transform="rotate(-36 139.9 310.7)"/>
<rect x="139.3" y="309.0" width="2.3" height="2.7" fill="none" stroke="#dadada" stroke-width="0.800" transform="rotate(-38 139.3 309.0)"/>
<rect x="143.7" y="303.1" width="2.4" height="2.5" fill="none" stroke="#dadada" stroke-width="0.800" transform="rotate(-12 143.7 303.1)"/>
<rect x="129.3" y="311.3" width="4.5" height="4.0" fill="none" stroke="#dadada" stroke-width="0.800" transform="rotate(-3 129.3 311.3)"/>
<rect x="128.4" y="309.3" width="2.3" height="2.7" fill="none" stroke="#dadada" stroke-width="0.800" transform="rotate(-19 128.4 309.3)"/>
<rect x="136.1" y="305.9" width="2.1" height="3.9" fill="none" stroke="#dadada" stroke-width="0.800" transform="rotate(2 136.1 305.9)"/>
<rect x="141.3" y="315.0" width="2.1" height="3.1" fill="none" stroke="#dadada" stroke-width="0.800" transform="rotate(38 141.3 315.0)"/>
<rect x="144.1" y="302.0" width="2.8" height="2.7" fill="none" stroke="#dadada" stroke-width="0.800" transform="rotate(-27 144.1 302.0)"/>
<rect x="134.9" y="301.7" width="4.3" height="2.7" fill="none" stroke="#dadada" stroke-width="0.800" transform="rotate(-22 134.9 301.7)"/>
<rect x="145.0" y="292.9" width="4.6" height="3.6" fill="none" stroke="#dadada" stroke-width="0.800" transform="rotate(25 145.0 292.9)"/>
<rect x="132.5" y="304.7" width="3.6" height="2.7" fill="none" stroke="#dadada" stroke-width="0.800" transform="rotate(-38 132.5 304.7)"/>
<rect x="141.8" y="309.8" width="2.8" height="3.4" fill="none" stroke="#dadada" stroke-width="0.800" transform="rotate(37 141.8 309.8)"/>
<rect x="108.5" y="313.6" width="5.0" height="3.9" fill="none" stroke="#dadada" stroke-width="0.800" transform="rotate(-11 108.5 313.6)"/>
<rect x="112.5" y="330.2" width="2.6" height="2.4" fill="none" stroke="#dadada" stroke-width="0.800" transform="rotate(10 112.5 330.2)"/>
<rect x="129.5" y="363.4" width="3.4" height="3.3" fill="none" stroke="#dadada" stroke-width="0.800" transform="rotate(24 129.5 363.4)"/>
<rect x="109.1" y="353.7" width="4.7" height="3.6" fill="none" stroke="#dadada" stroke-width="0.800" transform="rotate(20 109.1 353.7)"/>
<rect x="119.0" y="327.6" width="4.4" height="2.7" fill="none" stroke="#dadada" stroke-width="0.800" transform="rotate(24 119.0 327.6)"/>
<rect x="131.3" y="339.4" width="3.2" height="3.9" fill="none" stroke="#dadada" stroke-width="0.800" transform="rotate(18 131.3 339.4)"/>
<rect x="111.3" y="324.9" width="2.5" height="3.8" fill="none" stroke="#dadada" stroke-width="0.800" transform="rotate(25 111.3 324.9)"/>
<rect x="110.7" y="362.6" width="4.9" height="3.3" fill="none" stroke="#dadada" stroke-width="0.800" transform="rotate(-12 110.7 362.6)"/>
<rect x="120.7" y="325.1" width="2.0" height="3.9" fill="none" stroke="#dadada" stroke-width="0.800" transform="rotate(12 120.7 325.1)"/>
<rect x="120.2" y="368.4" width="3.3" height="3.7" fill="none" stroke="#dadada" stroke-width="0.800" transform="rotate(26 120.2 368.4)"/>
<rect x="112.3" y="331.6" width="2.9" height="2.5" fill="none" stroke="#dadada" stroke-width="0.800" transform="rotate(7 112.3 331.6)"/>
<rect x="113.5" y="340.6" width="2.4" height="3.8" fill="none" stroke="#dadada" stroke-width="0.800" transform="rotate(-12 113.5 340.6)"/>
<rect x="118.5" y="349.5" width="4.7" height="2.8" fill="none" stroke="#dadada" stroke-width="0.800" transform="rotate(33 118.5 349.5)"/>
<rect x="119.5" y="346.7" width="3.6" height="2.0" fill="none" stroke="#dadada" stroke-width="0.800" transform="rotate(-5 119.5 346.7)"/>
<rect x="111.6" y="318.2" width="4.4" height="2.3" fill="none" stroke="#dadada" stroke-width="0.800" transform="rotate(-2 111.6 318.2)"/>
<rect x="125.1" y="348.0" width="3.0" height="3.0" fill="none" stroke="#dadada" stroke-width="0.800" transform="rotate(4 125.1 348.0)"/>
<rect x="126.6" y="323.7" width="3.7" height="2.5" fill="none" stroke="#dadada" stroke-width="0.800" transform="rotate(-18 126.6 323.7)"/>
<rect x="126.3" y="345.4" width="3.7" height="3.5" fill="none" stroke="#dadada" stroke-width="0.800" transform="rotate(33 126.3 345.4)"/>
<rect x="118.1" y="351.1" width="3.5" height="3.0" fill="none" stroke="#dadada" stroke-width="0.800" transform="rotate(15 118.1 351.1)"/>
<rect x="118.3" y="346.8" width="3.4" height="3.9" fill="none" stroke="#dadada" stroke-width="0.800" transform="rotate(16 118.3 346.8)"/>
<rect x="128.9" y="368.9" width="2.8" height="3.1" fill="none" stroke="#dadada" stroke-width="0.800" transform="rotate(35 128.9 368.9)"/>
<rect x="128.0" y="325.4" width="2.4" height="2.9" fill="none" stroke="#dadada" stroke-width="0.800" transform="rotate(-34 128.0 325.4)"/>
<rect x="113.0" y="321.9" width="4.0" height="3.6" fill="none" stroke="#dadada" stroke-width="0.800" transform="rotate(32 113.0 321.9)"/>
<rect x="119.8" y="321.4" width="4.0" height="2.3" fill="none" stroke="#dadada" stroke-width="0.800" transform="rotate(31 119.8 321.4)"/>
<rect x="187.3" y="280.2" width="4.9" height="2.8" fill="none" stroke="#dadada" stroke-width="0.800" transform="rotate(-1 187.3 280.2)"/>
<rect x="189.2" y="331.1" width="2.5" height="2.9" fill="none" stroke="#dadada" stroke-width="0.800" transform="rotate(1 189.2 331.1)"/>
<rect x="135.1" y="278.2" width="3.0" height="3.4" fill="none" stroke="#dadada" stroke-width="0.800" transform="rotate(-38 135.1 278.2)"/>
<rect x="153.0" y="298.6" width="2.1" height="2.7" fill="none" stroke="#dadada" stroke-width="0.800" transform="rotate(10 153.0 298.6)"/>
<rect x="149.5" y="267.3" width="5.0" height="3.6" fill="none" stroke="#dadada" stroke-width="0.800" transform="rotate(38 149.5 267.3)"/>
<rect x="115.7" y="284.0" width="2.1" height="3.6" fill="none" stroke="#dadada" stroke-width="0.800" transform="rotate(-18 115.7 284.0)"/>
<rect x="117.8" y="297.0" width="4.7" height="3.6" fill="none" stroke="#dadada" stroke-width="0.800" transform="rotate(-19 117.8 297.0)"/>
<rect x="119.4" y="338.3" width="3.7" height="3.4" fill="none" stroke="#dadada" stroke-width="0.800" transform="rotate(-33 119.4 338.3)"/>
<rect x="111.8" y="319.1" width="3.3" height="2.1" fill="none" stroke="#dadada" stroke-width="0.800" transform="rotate(35 111.8 319.1)"/>
<rect x="137.6" y="266.4" width="2.3" height="3.7" fill="none" stroke="#dadada" stroke-width="0.800" transform="rotate(-35 137.6 266.4)"/>
<rect x="140.4" y="263.6" width="3.0" height="3.1" fill="none" stroke="#dadada" stroke-width="0.800" transform="rotate(34 140.4 263.6)"/>
<rect x="133.2" y="261.0" width="3.6" height="2.5" fill="none" stroke="#dadada" stroke-width="0.800" transform="rotate(-31 133.2 261.0)"/>
<rect x="131.9" y="260.4" width="2.6" height="2.6" fill="none" stroke="#dadada" stroke-width="0.800" transform="rotate(-16 131.9 260.4)"/>
<rect x="139.1" y="262.3" width="3.5" height="2.4" fill="none" stroke="#dadada" stroke-width="0.800" transform="rotate(-12 139.1 262.3)"/>
<rect x="130.2" y="262.0" width="2.0" height="3.5" fill="none" stroke="#dadada" stroke-width="0.800" transform="rotate(4 130.2 262.0)"/>
<rect x="132.3" y="263.8" width="4.8" height="2.2" fill="none" stroke="#dadada" stroke-width="0.800" transform="rotate(26 132.3 263.8)"/>
<rect x="135.2" y="264.0" width="4.5" height="2.8" fill="none" stroke="#dadada" stroke-width="0.800" transform="rotate(1 135.2 264.0)"/>
<rect x="169.3" y="225.6" width="3.0" height="3.7" fill="none" stroke="#dadada" stroke-width="0.800" transform="rotate(17 169.3 225.6)"/>
<rect x="167.8" y="212.3" width="3.0" height="2.1" fill="none" stroke="#dadada" stroke-width="0.800" transform="rotate(-30 167.8 212.3)"/>
<rect x="152.0" y="220.0" width="2.8" height="2.3" fill="none" stroke="#dadada" stroke-width="0.800" transform="rotate(-33 152.0 220.0)"/>
<rect x="173.6" y="223.0" width="4.0" height="2.6" fill="none" stroke="#dadada" stroke-width="0.800" transform="rotate(-21 173.6 223.0)"/>
<rect x="158.2" y="213.6" width="2.5" height="2.9" fill="none" stroke="#dadada" stroke-width="0.800" transform="rotate(-19 158.2 213.6)"/>
<rect x="176.9" y="225.4" width="3.6" height="2.5" fill="none" stroke="#dadada" stroke-width="0.800" transform="rotate(37 176.9 225.4)"/>
<rect x="158.7" y="211.2" width="2.0" height="2.8" fill="none" stroke="#dadada" stroke-width="0.800" transform="rotate(-2 158.7 211.2)"/>
<rect x="164.1" y="207.6" width="3.5" height="2.0" fill="none" stroke="#dadada" stroke-width="0.800" transform="rotate(-19 164.1 207.6)"/>
<rect x="152.5" y="212.2" width="2.1" height="2.0" fill="none" stroke="#dadada" stroke-width="0.800" transform="rotate(-16 152.5 212.2)"/>
<rect x="156.5" y="216.5" width="3.6" height="3.5" fill="none" stroke="#dadada" stroke-width="0.800" transform="rotate(13 156.5 216.5)"/>
<rect x="170.0" y="223.2" width="3.2" height="2.7" fill="none" stroke="#dadada" stroke-width="0.800" transform="rotate(39 170.0 223.2)"/>
<rect x="154.2" y="219.7" width="3.9" height="2.1" fill="none" stroke="#dadada" stroke-width="0.800" transform="rotate(27 154.2 219.7)"/>
<rect x="175.0" y="217.4" width="4.2" height="3.6" fill="none" stroke="#dadada" stroke-width="0.800" transform="rotate(-29 175.0 217.4)"/>
<rect x="164.7" y="214.6" width="4.5" height="3.6" fill="none" stroke="#dadada" stroke-width="0.800" transform="rotate(26 164.7 214.6)"/>
<rect x="161.7" y="228.6" width="4.0" height="3.4" fill="none" stroke="#dadada" stroke-width="0.800" transform="rotate(-22 161.7 228.6)"/>
<rect x="110.9" y="204.3" width="3.1" height="2.2" fill="none" stroke="#dadada" stroke-width="0.800" transform="rotate(27 110.9 204.3)"/>
<rect x="159.4" y="220.1" width="3.9" height="3.4" fill="none" stroke="#dadada" stroke-width="0.800" transform="rotate(-1 159.4 220.1)"/>
<rect x="108.3" y="225.5" width="4.2" height="3.0" fill="none" stroke="#dadada" stroke-width="0.800" transform="rotate(3 108.3 225.5)"/>
<rect x="168.7" y="202.1" width="4.2" height="2.5" fill="none" stroke="#dadada" stroke-width="0.800" transform="rotate(-34 168.7 202.1)"/>
<rect x="132.4" y="223.3" width="2.6" height="3.5" fill="none" stroke="#dadada" stroke-width="0.800" transform="rotate(38 132.4 223.3)"/>
<rect x="153.4" y="212.2" width="3.4" height="3.4" fill="none" stroke="#dadada" stroke-width="0.800" transform="rotate(21 153.4 212.2)"/>
<rect x="164.8" y="220.6" width="2.2" height="2.3" fill="none" stroke="#dadada" stroke-width="0.800" transform="rotate(-20 164.8 220.6)"/>
<rect x="266.5" y="286.0" width="10.5" height="9.5" fill="#fff" stroke="#cfcfcf" stroke-width="0.9" />
<path d="M266.0 295.5L253.0 310.5" stroke="#cfcfcf" stroke-width="0.9" fill="none" />
<ellipse cx="137" cy="209" rx="1.3" ry="2" fill="none" stroke="#444" stroke-width="0.8"/>
<ellipse cx="133" cy="214" rx="1.3" ry="2" fill="none" stroke="#444" stroke-width="0.8"/>
<ellipse cx="158" cy="203" rx="1.3" ry="2" fill="none" stroke="#444" stroke-width="0.8"/>
<rect x="323" y="171" width="3.5" height="2.5" fill="none" stroke="#d2d2d2" stroke-width="0.8"/>
<rect x="329" y="181" width="3.5" height="2.5" fill="none" stroke="#d2d2d2" stroke-width="0.8"/>
<rect x="340" y="183" width="3.5" height="2.5" fill="none" stroke="#d2d2d2" stroke-width="0.8"/>
<rect x="272" y="216" width="3.5" height="2.5" fill="none" stroke="#d2d2d2" stroke-width="0.8"/>
<rect x="245" y="174" width="3.5" height="2.5" fill="none" stroke="#d2d2d2" stroke-width="0.8"/>
<rect x="213" y="318" width="3.5" height="2.5" fill="none" stroke="#d2d2d2" stroke-width="0.8"/>
<rect x="243" y="308" width="3.5" height="2.5" fill="none" stroke="#d2d2d2" stroke-width="0.8"/>
<rect x="196" y="332" width="3.5" height="2.5" fill="none" stroke="#d2d2d2" stroke-width="0.8"/>
<rect x="283" y="318" width="3.5" height="2.5" fill="none" stroke="#d2d2d2" stroke-width="0.8"/>
<rect x="336" y="272" width="3.5" height="2.5" fill="none" stroke="#d2d2d2" stroke-width="0.8"/>
<rect x="307" y="266" width="3.5" height="2.5" fill="none" stroke="#d2d2d2" stroke-width="0.8"/>
<rect x="310" y="278" width="3.5" height="2.5" fill="none" stroke="#d2d2d2" stroke-width="0.8"/>
<rect x="178" y="325" width="3.5" height="2.5" fill="none" stroke="#d2d2d2" stroke-width="0.8"/>
<rect x="167" y="331" width="3.5" height="2.5" fill="none" stroke="#d2d2d2" stroke-width="0.8"/>
<path d="M232.0 346.0L246.0 346.0" stroke="#cfcfcf" stroke-width="0.8" fill="none" />
<path d="M232.0 349.0L246.0 349.0" stroke="#cfcfcf" stroke-width="0.8" fill="none" />
<path d="M232.0 352.0L246.0 352.0" stroke="#cfcfcf" stroke-width="0.8" fill="none" />
<path d="M232.0 355.0L246.0 355.0" stroke="#cfcfcf" stroke-width="0.8" fill="none" />
<path d="M232.0 358.0L246.0 358.0" stroke="#cfcfcf" stroke-width="0.8" fill="none" />
<path d="M232.0 361.0L246.0 361.0" stroke="#cfcfcf" stroke-width="0.8" fill="none" />
<path d="M836 583L840 574L861 551L889 527.500L939 500L1020 453" stroke="#a8a8a8" stroke-width="0.7" fill="none" />
<path d="M838 600L843 587L866 560L889 535L946 500L1022 456" stroke="#a8a8a8" stroke-width="0.7" fill="none" />
<path d="M840 609L848 593L870 566L889 539L952 500L1024 459" stroke="#a8a8a8" stroke-width="0.7" fill="none" />
<path d="M845 609L852 597L874 571L889 543L955 500L1026 462" stroke="#a8a8a8" stroke-width="0.7" fill="none" />
<path d="M842 612L849 597L872 568.500L889 541L953.500 500L1025 460.500" stroke="#e3e3e3" stroke-width="2" fill="none" />
<rect x="1012" y="407" width="9" height="5" fill="none" stroke="#cfcfcf" stroke-width="0.9" transform="rotate(-30 1012 407)"/>
<rect x="1000" y="414" width="9" height="5" fill="none" stroke="#cfcfcf" stroke-width="0.9" transform="rotate(-30 1000 414)"/>
<rect x="1024" y="399" width="9" height="5" fill="none" stroke="#cfcfcf" stroke-width="0.9" transform="rotate(-30 1024 399)"/>
<path d="M770 322H846V364L833 368L831 418L820 424L800 428L765 426L742 420L730 408L727 398L735 385L752 372L760 352L768 330Z" stroke="none" stroke-width="1" fill="#dedede" />
<rect x="781.8" y="378.9" width="11.3" height="5.5" fill="#ffffff" stroke="#d4d4d4" stroke-width="0.600"/>
<rect x="826.1" y="342.6" width="10.2" height="5.6" fill="#ffffff" stroke="#d4d4d4" stroke-width="0.600"/>
<rect x="819.2" y="333.2" width="5.7" height="3.1" fill="#ffffff" stroke="#d4d4d4" stroke-width="0.600"/>
<rect x="797.5" y="362.8" width="7.1" height="7.3" fill="#f4f4f4" stroke="#d4d4d4" stroke-width="0.600"/>
<rect x="800.5" y="405.5" width="3.6" height="2.7" fill="#f4f4f4" stroke="#d4d4d4" stroke-width="0.600"/>
<rect x="798.0" y="400.3" width="5.9" height="6.3" fill="#f4f4f4" stroke="#d4d4d4" stroke-width="0.600"/>
<rect x="789.1" y="386.7" width="7.5" height="6.8" fill="#ececec" stroke="#d4d4d4" stroke-width="0.600"/>
<rect x="804.0" y="363.9" width="8.0" height="8.6" fill="#ffffff" stroke="#d4d4d4" stroke-width="0.600"/>
<rect x="809.9" y="354.9" width="5.1" height="4.4" fill="#ffffff" stroke="#d4d4d4" stroke-width="0.600"/>
<rect x="793.9" y="334.6" width="4.0" height="4.4" fill="#ffffff" stroke="#d4d4d4" stroke-width="0.600"/>
<rect x="837.4" y="407.0" width="3.0" height="3.9" fill="#ffffff" stroke="#d4d4d4" stroke-width="0.600"/>
<rect x="783.7" y="420.1" width="6.6" height="3.0" fill="#f4f4f4" stroke="#d4d4d4" stroke-width="0.600"/>
<rect x="817.6" y="350.4" width="3.8" height="4.7" fill="#ececec" stroke="#d4d4d4" stroke-width="0.600"/>
<rect x="815.4" y="335.6" width="5.2" height="3.2" fill="#ffffff" stroke="#d4d4d4" stroke-width="0.600"/>
<rect x="783.1" y="371.7" width="9.1" height="3.7" fill="#ffffff" stroke="#d4d4d4" stroke-width="0.600"/>
<rect x="753.0" y="395.7" width="4.2" height="6.7" fill="#ffffff" stroke="#d4d4d4" stroke-width="0.600"/>
<rect x="775.4" y="421.0" width="3.0" height="8.1" fill="#ffffff" stroke="#d4d4d4" stroke-width="0.600"/>
<rect x="765.5" y="410.7" width="4.9" height="5.1" fill="#ffffff" stroke="#d4d4d4" stroke-width="0.600"/>
<rect x="802.6" y="333.8" width="11.9" height="3.9" fill="#cfcfcf" stroke="#d4d4d4" stroke-width="0.600"/>
<rect x="823.3" y="361.8" width="3.7" height="3.9" fill="#f4f4f4" stroke="#d4d4d4" stroke-width="0.600"/>
<rect x="800.4" y="336.5" width="8.3" height="7.9" fill="#f4f4f4" stroke="#d4d4d4" stroke-width="0.600"/>
<rect x="827.3" y="341.9" width="4.4" height="8.4" fill="#ffffff" stroke="#d4d4d4" stroke-width="0.600"/>
<rect x="813.3" y="416.2" width="4.8" height="8.7" fill="#ececec" stroke="#d4d4d4" stroke-width="0.600"/>
<rect x="798.4" y="365.3" width="3.9" height="2.8" fill="#cfcfcf" stroke="#d4d4d4" stroke-width="0.600"/>
<rect x="758.2" y="393.0" width="5.3" height="7.9" fill="#ffffff" stroke="#d4d4d4" stroke-width="0.600"/>
<rect x="786.0" y="375.0" width="11.4" height="8.9" fill="#f4f4f4" stroke="#d4d4d4" stroke-width="0.600"/>
<rect x="757.1" y="378.8" width="10.7" height="6.5" fill="#cfcfcf" stroke="#d4d4d4" stroke-width="0.600"/>
<rect x="755.4" y="413.7" width="9.7" height="2.9" fill="#ececec" stroke="#d4d4d4" stroke-width="0.600"/>
<rect x="781.0" y="329.9" width="4.6" height="4.9" fill="#ffffff" stroke="#d4d4d4" stroke-width="0.600"/>
<rect x="839.0" y="333.0" width="4.2" height="5.4" fill="#cfcfcf" stroke="#d4d4d4" stroke-width="0.600"/>
<rect x="804.3" y="391.7" width="8.3" height="3.4" fill="#ffffff" stroke="#d4d4d4" stroke-width="0.600"/>
<rect x="833.6" y="370.5" width="6.2" height="4.5" fill="#ffffff" stroke="#d4d4d4" stroke-width="0.600"/>
<rect x="734.3" y="386.3" width="7.3" height="7.2" fill="#cfcfcf" stroke="#d4d4d4" stroke-width="0.600"/>
<rect x="781.8" y="360.0" width="3.4" height="8.6" fill="#f4f4f4" stroke="#d4d4d4" stroke-width="0.600"/>
<rect x="819.3" y="413.7" width="6.2" height="7.0" fill="#ffffff" stroke="#d4d4d4" stroke-width="0.600"/>
<rect x="827.8" y="364.9" width="10.1" height="8.1" fill="#ffffff" stroke="#d4d4d4" stroke-width="0.600"/>
<rect x="733.6" y="388.9" width="6.4" height="2.6" fill="#ffffff" stroke="#d4d4d4" stroke-width="0.600"/>
<rect x="740.8" y="386.7" width="11.9" height="8.2" fill="#cfcfcf" stroke="#d4d4d4" stroke-width="0.600"/>
<rect x="774.7" y="396.0" width="8.2" height="5.4" fill="#ffffff" stroke="#d4d4d4" stroke-width="0.600"/>
<rect x="741.2" y="397.5" width="3.3" height="6.4" fill="#ececec" stroke="#d4d4d4" stroke-width="0.600"/>
<rect x="734.5" y="417.8" width="4.0" height="7.6" fill="#ececec" stroke="#d4d4d4" stroke-width="0.600"/>
<rect x="765.1" y="390.5" width="4.8" height="3.6" fill="#cfcfcf" stroke="#d4d4d4" stroke-width="0.600"/>
<rect x="804.6" y="367.3" width="11.0" height="4.6" fill="#cfcfcf" stroke="#d4d4d4" stroke-width="0.600"/>
<rect x="820.7" y="413.6" width="10.9" height="5.0" fill="#ffffff" stroke="#d4d4d4" stroke-width="0.600"/>
<rect x="833.3" y="344.6" width="4.2" height="4.8" fill="#ffffff" stroke="#d4d4d4" stroke-width="0.600"/>
<rect x="810.2" y="417.1" width="5.5" height="3.6" fill="#ececec" stroke="#d4d4d4" stroke-width="0.600"/>
<rect x="783.8" y="414.7" width="10.5" height="5.0" fill="#ffffff" stroke="#d4d4d4" stroke-width="0.600"/>
<rect x="786.3" y="354.9" width="10.6" height="8.9" fill="#ececec" stroke="#d4d4d4" stroke-width="0.600"/>
<rect x="767.2" y="405.2" width="5.5" height="6.4" fill="#cfcfcf" stroke="#d4d4d4" stroke-width="0.600"/>
<rect x="794.8" y="354.3" width="10.1" height="2.6" fill="#f4f4f4" stroke="#d4d4d4" stroke-width="0.600"/>
<rect x="776.6" y="342.6" width="9.9" height="4.2" fill="#f4f4f4" stroke="#d4d4d4" stroke-width="0.600"/>
<rect x="819.7" y="420.4" width="4.0" height="3.2" fill="#ffffff" stroke="#d4d4d4" stroke-width="0.600"/>
<rect x="804.1" y="403.1" width="11.6" height="6.9" fill="#f4f4f4" stroke="#d4d4d4" stroke-width="0.600"/>
<rect x="822.6" y="349.1" width="9.4" height="7.4" fill="#ffffff" stroke="#d4d4d4" stroke-width="0.600"/>
<rect x="810.6" y="341.6" width="5.5" height="4.7" fill="#ffffff" stroke="#d4d4d4" stroke-width="0.600"/>
<rect x="787.0" y="421.7" width="4.4" height="8.0" fill="#f4f4f4" stroke="#d4d4d4" stroke-width="0.600"/>
<rect x="741.6" y="415.4" width="9.5" height="3.3" fill="#ececec" stroke="#d4d4d4" stroke-width="0.600"/>
<rect x="753.7" y="411.0" width="3.1" height="6.1" fill="#ffffff" stroke="#d4d4d4" stroke-width="0.600"/>
<rect x="819.6" y="416.5" width="7.2" height="6.7" fill="#f4f4f4" stroke="#d4d4d4" stroke-width="0.600"/>
<rect x="742.9" y="408.9" width="10.2" height="8.5" fill="#ffffff" stroke="#d4d4d4" stroke-width="0.600"/>
<rect x="755.5" y="412.2" width="11.8" height="8.9" fill="#ffffff" stroke="#d4d4d4" stroke-width="0.600"/>
<rect x="839.4" y="415.4" width="5.4" height="7.2" fill="#ffffff" stroke="#d4d4d4" stroke-width="0.600"/>
<rect x="770.3" y="332.1" width="7.0" height="6.1" fill="#cfcfcf" stroke="#d4d4d4" stroke-width="0.600"/>
<rect x="785.6" y="326.8" width="10.3" height="2.9" fill="#ffffff" stroke="#d4d4d4" stroke-width="0.600"/>
<rect x="818.7" y="337.8" width="4.3" height="5.9" fill="#ffffff" stroke="#d4d4d4" stroke-width="0.600"/>
<rect x="824.4" y="391.6" width="11.5" height="5.7" fill="#ffffff" stroke="#d4d4d4" stroke-width="0.600"/>
<rect x="815.4" y="367.1" width="8.0" height="7.9" fill="#ffffff" stroke="#d4d4d4" stroke-width="0.600"/>
<rect x="802.3" y="375.2" width="10.6" height="6.1" fill="#cfcfcf" stroke="#d4d4d4" stroke-width="0.600"/>
<path d="M783.500 316L786 335L792 352L800 366" stroke="#fff" stroke-width="1.6" fill="none" />
<path d="M783.500 316L786 335L792 352L800 366" stroke="#d0d0d0" stroke-width="0.6" fill="none" />
<rect x="832.0" y="343.0" width="14.0" height="19.0" fill="#cfcfcf" stroke="#bdbdbd" stroke-width="0.8" />
<path d="M838 378Q828 395 830 425" stroke="#cfcfcf" stroke-width="1" fill="none" />
<path d="M842 378Q832 395 834 425" stroke="#cfcfcf" stroke-width="1" fill="none" />
<path d="M375.800 300V272Q376 265.300 383 265.300H460Q466.700 265.500 466.700 272V300" stroke="#d0d0d0" stroke-width="1.6" fill="none" />
<path d="M374.400 293.400H463.700Q466 300 461 308Q450 322 423 323Q398 322 385 312Q374 303 374.400 293.400Z" stroke="none" stroke-width="1" fill="#dedede" />
<rect x="377.3" y="275.0" width="37.7" height="18.4" fill="#dcdcdc" stroke="none" stroke-width="1" />
<rect x="431.2" y="275.0" width="32.5" height="22.8" fill="#dcdcdc" stroke="none" stroke-width="1" />
<rect x="466.7" y="279.4" width="4.1" height="31.6" fill="#dadada" stroke="none" stroke-width="1" />
<rect x="470.8" y="283.8" width="6.2" height="27.2" fill="#c4c4c4" stroke="none" stroke-width="1" />
<path d="M378.0 277.5L414.5 277.5" stroke="#ececec" stroke-width="0.7" fill="none" />
<path d="M432.0 277.5L463.0 277.5" stroke="#ececec" stroke-width="0.7" fill="none" />
<path d="M378.0 285.5L414.5 285.5" stroke="#ececec" stroke-width="0.7" fill="none" />
<path d="M432.0 285.5L463.0 285.5" stroke="#ececec" stroke-width="0.7" fill="none" />
<path d="M378.0 293.0L414.5 293.0" stroke="#ececec" stroke-width="0.7" fill="none" />
<path d="M432.0 293.0L463.0 293.0" stroke="#ececec" stroke-width="0.7" fill="none" />
<path d="M390.0 300.0L440.0 300.0" stroke="#ececec" stroke-width="0.7" fill="none" />
<path d="M390.0 304.5L440.0 304.5" stroke="#ececec" stroke-width="0.7" fill="none" />
<path d="M390.0 309.0L440.0 309.0" stroke="#ececec" stroke-width="0.7" fill="none" />
<rect x="380.3" y="280.6" width="2.0" height="2.0" fill="#1f9a3a" stroke="none" stroke-width="1" />
<rect x="386.2" y="280.6" width="2.0" height="2.0" fill="#1f9a3a" stroke="none" stroke-width="1" />
<rect x="389.2" y="280.6" width="2.0" height="2.0" fill="#1f9a3a" stroke="none" stroke-width="1" />
<rect x="395.1" y="280.6" width="2.0" height="2.0" fill="#1f9a3a" stroke="none" stroke-width="1" />
<rect x="401.0" y="280.6" width="2.0" height="2.0" fill="#1f9a3a" stroke="none" stroke-width="1" />
<rect x="406.9" y="280.6" width="2.0" height="2.0" fill="#1f9a3a" stroke="none" stroke-width="1" />
<rect x="383.2" y="288.7" width="2.0" height="2.0" fill="#1f9a3a" stroke="none" stroke-width="1" />
<rect x="386.2" y="288.7" width="2.0" height="2.0" fill="#1f9a3a" stroke="none" stroke-width="1" />
<rect x="392.1" y="288.7" width="2.0" height="2.0" fill="#1f9a3a" stroke="none" stroke-width="1" />
<rect x="398.0" y="288.7" width="2.0" height="2.0" fill="#1f9a3a" stroke="none" stroke-width="1" />
<rect x="404.0" y="288.7" width="2.0" height="2.0" fill="#1f9a3a" stroke="none" stroke-width="1" />
<rect x="409.9" y="288.7" width="2.0" height="2.0" fill="#1f9a3a" stroke="none" stroke-width="1" />
<path d="M436.4 280.400l1.100 -2l1.100 2z" stroke="none" stroke-width="1" fill="#1f9a3a" />
<path d="M439.4 280.400l1.100 -2l1.100 2z" stroke="none" stroke-width="1" fill="#1f9a3a" />
<path d="M446 280.400l1.100 -2l1.100 2z" stroke="none" stroke-width="1" fill="#1f9a3a" />
<path d="M449 280.400l1.100 -2l1.100 2z" stroke="none" stroke-width="1" fill="#1f9a3a" />
<path d="M452 280.400l1.100 -2l1.100 2z" stroke="none" stroke-width="1" fill="#1f9a3a" />
<path d="M458.6 280.400l1.100 -2l1.100 2z" stroke="none" stroke-width="1" fill="#1f9a3a" />
<path d="M460.8 280.400l1.100 -2l1.100 2z" stroke="none" stroke-width="1" fill="#1f9a3a" />
<rect x="433.0" y="301.0" width="1.5" height="1.4" fill="#1f9a3a" stroke="none" stroke-width="1" />
<rect x="433.0" y="304.5" width="1.5" height="1.4" fill="#1f9a3a" stroke="none" stroke-width="1" />
<rect x="410.0" y="317.0" width="1.5" height="1.4" fill="#1f9a3a" stroke="none" stroke-width="1" />
<rect x="413.0" y="317.5" width="1.5" height="1.4" fill="#1f9a3a" stroke="none" stroke-width="1" />
<rect x="416.0" y="318.0" width="1.5" height="1.4" fill="#1f9a3a" stroke="none" stroke-width="1" />
<rect x="431.0" y="318.5" width="1.5" height="1.4" fill="#1f9a3a" stroke="none" stroke-width="1" />
<rect x="435.0" y="318.0" width="1.5" height="1.4" fill="#1f9a3a" stroke="none" stroke-width="1" />
<rect x="438.0" y="317.0" width="1.5" height="1.4" fill="#1f9a3a" stroke="none" stroke-width="1" />
<path d="M438.600 320L460.800 309V314L452 323.700Z" stroke="none" stroke-width="1" fill="#9c9c9c" />
<circle cx="378.500" cy="304.500" r="2.400" fill="#9a9a9a"/>
<circle cx="427.500" cy="308.500" r="1.200" fill="#222"/>
<circle cx="405.500" cy="319" r="1.600" fill="#8a8a8a"/>
<circle cx="466" cy="326" r="1.800" fill="#8a8a8a"/>
<rect x="414.5" y="317.0" width="8.5" height="2.5" fill="#cfcfcf" stroke="none" stroke-width="1" />
<path d="M350 311.500L408 330V336L350 317Z" stroke="#cdcdcd" stroke-width="0.8" fill="#f3f3f3" />
<path d="M356.0 313.5L353.5 320.5" stroke="#d2d2d2" stroke-width="0.7" fill="none" />
<path d="M360.6 315.0L358.1 322.0" stroke="#d2d2d2" stroke-width="0.7" fill="none" />
<path d="M365.2 316.5L362.7 323.5" stroke="#d2d2d2" stroke-width="0.7" fill="none" />
<path d="M369.8 318.0L367.3 325.0" stroke="#d2d2d2" stroke-width="0.7" fill="none" />
<path d="M374.4 319.5L371.9 326.5" stroke="#d2d2d2" stroke-width="0.7" fill="none" />
<path d="M379.0 321.0L376.5 328.0" stroke="#d2d2d2" stroke-width="0.7" fill="none" />
<path d="M383.6 322.5L381.1 329.5" stroke="#d2d2d2" stroke-width="0.7" fill="none" />
<path d="M388.2 324.0L385.7 331.0" stroke="#d2d2d2" stroke-width="0.7" fill="none" />
<path d="M392.8 325.5L390.3 332.5" stroke="#d2d2d2" stroke-width="0.7" fill="none" />
<path d="M397.4 327.0L394.9 334.0" stroke="#d2d2d2" stroke-width="0.7" fill="none" />
<path d="M402.0 328.5L399.5 335.5" stroke="#d2d2d2" stroke-width="0.7" fill="none" />
<path d="M350 322Q375 330 404 343" stroke="#c9c9c9" stroke-width="0.9" fill="none" />
<path d="M105 345L200 350" stroke="none" stroke-width="1" fill="none" />
<path d="M441 329.500L480 319L515 309.500" stroke="#c9c9c9" stroke-width="9" fill="none" stroke-linecap="round" stroke-linejoin="round"/>
<path d="M441 329.500L480 319L515 309.500" stroke="#f6f6f6" stroke-width="7.4" fill="none" stroke-linecap="round" stroke-linejoin="round"/>
<path d="M443.2 325.2L445.0 332.2" stroke="#cccccc" stroke-width="0.7" fill="none" />
<path d="M447.9 323.9L449.7 330.9" stroke="#cccccc" stroke-width="0.7" fill="none" />
<path d="M452.6 322.7L454.4 329.7" stroke="#cccccc" stroke-width="0.7" fill="none" />
<path d="M457.3 321.4L459.1 328.4" stroke="#cccccc" stroke-width="0.7" fill="none" />
<path d="M462.0 320.1L463.8 327.1" stroke="#cccccc" stroke-width="0.7" fill="none" />
<path d="M466.7 318.8L468.5 325.8" stroke="#cccccc" stroke-width="0.7" fill="none" />
<path d="M471.4 317.6L473.2 324.6" stroke="#cccccc" stroke-width="0.7" fill="none" />
<path d="M476.1 316.3L477.9 323.3" stroke="#cccccc" stroke-width="0.7" fill="none" />
<path d="M480.8 315.0L482.6 322.0" stroke="#cccccc" stroke-width="0.7" fill="none" />
<path d="M485.5 313.8L487.3 320.8" stroke="#cccccc" stroke-width="0.7" fill="none" />
<path d="M490.2 312.5L492.0 319.5" stroke="#cccccc" stroke-width="0.7" fill="none" />
<path d="M494.9 311.2L496.7 318.2" stroke="#cccccc" stroke-width="0.7" fill="none" />
<path d="M499.6 310.0L501.4 317.0" stroke="#cccccc" stroke-width="0.7" fill="none" />
<path d="M504.3 308.7L506.1 315.7" stroke="#cccccc" stroke-width="0.7" fill="none" />
<path d="M509.0 307.4L510.8 314.4" stroke="#cccccc" stroke-width="0.7" fill="none" />
<path d="M513.7 306.1L515.5 313.1" stroke="#cccccc" stroke-width="0.7" fill="none" />
<path d="M349.600 409.600V346Q350 336 360 336H448Q453 336.500 453 342V406Q453 411.700 447 411.700H400Q396 411.700 396 407V362Q395 350 382 350Q368 350 367.300 362V405Q367 409.600 362 409.600Z" stroke="none" stroke-width="1" fill="#b3b3b3" />
<path d="M378 408V364Q378.500 358 382 358Q385.500 358 386 364V408Z" stroke="#e2e2e2" stroke-width="0.8" fill="#efefef" />
<path d="M371 338L395 340.500V350L371 347.500Z" stroke="none" stroke-width="1" fill="#7f9fbd" />
<path d="M403.0 362.0L419.0 355.0" stroke="#8e8e8e" stroke-width="2.2" fill="none" />
<path d="M429.0 355.0L446.0 362.0" stroke="#8e8e8e" stroke-width="2.2" fill="none" />
<path d="M406.0 354.0L413.0 360.5" stroke="#979797" stroke-width="1.6" fill="none" />
<path d="M443.0 354.0L436.0 360.5" stroke="#979797" stroke-width="1.6" fill="none" />
<path d="M403.0 373.0L419.0 366.0" stroke="#8e8e8e" stroke-width="2.2" fill="none" />
<path d="M429.0 366.0L446.0 373.0" stroke="#8e8e8e" stroke-width="2.2" fill="none" />
<path d="M406.0 365.0L413.0 371.5" stroke="#979797" stroke-width="1.6" fill="none" />
<path d="M443.0 365.0L436.0 371.5" stroke="#979797" stroke-width="1.6" fill="none" />
<path d="M403.0 384.0L419.0 377.0" stroke="#8e8e8e" stroke-width="2.2" fill="none" />
<path d="M429.0 377.0L446.0 384.0" stroke="#8e8e8e" stroke-width="2.2" fill="none" />
<path d="M406.0 376.0L413.0 382.5" stroke="#979797" stroke-width="1.6" fill="none" />
<path d="M443.0 376.0L436.0 382.5" stroke="#979797" stroke-width="1.6" fill="none" />
<path d="M403.0 395.0L419.0 388.0" stroke="#8e8e8e" stroke-width="2.2" fill="none" />
<path d="M429.0 388.0L446.0 395.0" stroke="#8e8e8e" stroke-width="2.2" fill="none" />
<path d="M406.0 387.0L413.0 393.5" stroke="#979797" stroke-width="1.6" fill="none" />
<path d="M443.0 387.0L436.0 393.5" stroke="#979797" stroke-width="1.6" fill="none" />
<path d="M403.0 406.0L419.0 399.0" stroke="#8e8e8e" stroke-width="2.2" fill="none" />
<path d="M429.0 399.0L446.0 406.0" stroke="#8e8e8e" stroke-width="2.2" fill="none" />
<path d="M406.0 398.0L413.0 404.5" stroke="#979797" stroke-width="1.6" fill="none" />
<path d="M443.0 398.0L436.0 404.5" stroke="#979797" stroke-width="1.6" fill="none" />
<path d="M408.300 322.700L417 322.700L416.200 339.500L407.800 339.500Z" stroke="#000" stroke-width="2.2" fill="#808080" />
<path d="M419.800 322.700L430 322.700L432.600 349.500L428 349.500L420.500 349.500Z" stroke="#000" stroke-width="2.2" fill="#fff" />
<path d="M420.800 323.700L429.200 323.700L430.800 339.500L420.800 339.500Z" stroke="none" stroke-width="1" fill="#808080" />
<path d="M408 340.500L415.500 352H420V340.500Z" stroke="#333" stroke-width="0.8" fill="#fff" />
<path d="M400.500 336.500L408 338.500L406.500 344L399.500 342Z" stroke="#555" stroke-width="0.8" fill="#fff" />
<path d="M432.500 338.500L440.500 336.500L442 342L434 344Z" stroke="#555" stroke-width="0.8" fill="#fff" />
<rect x="419.7" y="370.0" width="8.3" height="27.4" fill="#777" stroke="#000" stroke-width="2" />
<rect x="419.6" y="338.4" width="8.2" height="31.6" fill="#fff" stroke="#000" stroke-width="1" />
<rect x="360" y="341" width="2.200" height="1.300" fill="#e8262a" transform="rotate(-30 360 341)"/>
<rect x="363" y="346" width="2.200" height="1.300" fill="#e8262a" transform="rotate(-30 363 346)"/>
<rect x="367" y="351" width="2.200" height="1.300" fill="#e8262a" transform="rotate(-30 367 351)"/>
<rect x="362" y="338.5" width="2.200" height="1.300" fill="#e8262a" transform="rotate(-30 362 338.5)"/>
<rect x="450" y="360" width="2.200" height="1.300" fill="#e8262a" transform="rotate(-30 450 360)"/>
<rect x="451" y="417" width="2.200" height="1.300" fill="#e8262a" transform="rotate(-30 451 417)"/>
<rect x="436" y="418" width="2.200" height="1.300" fill="#e8262a" transform="rotate(-30 436 418)"/>
<rect x="446" y="415" width="2.200" height="1.300" fill="#e8262a" transform="rotate(-30 446 415)"/>
<rect x="440" y="399" width="2.200" height="1.300" fill="#e8262a" transform="rotate(-30 440 399)"/>
<path d="M475 333L497 323L503 338L483 348Z" stroke="none" stroke-width="1" fill="#8c8c8c" />
<rect x="478.0" y="334.0" width="2.0" height="2.0" fill="#fff" stroke="none" stroke-width="1" />
<rect x="481.0" y="340.0" width="2.0" height="2.0" fill="#fff" stroke="none" stroke-width="1" />
<rect x="481.6" y="332.5" width="2.0" height="2.0" fill="#fff" stroke="none" stroke-width="1" />
<rect x="484.6" y="338.5" width="2.0" height="2.0" fill="#fff" stroke="none" stroke-width="1" />
<rect x="485.2" y="331.0" width="2.0" height="2.0" fill="#fff" stroke="none" stroke-width="1" />
<rect x="488.2" y="337.0" width="2.0" height="2.0" fill="#fff" stroke="none" stroke-width="1" />
<rect x="488.8" y="329.5" width="2.0" height="2.0" fill="#fff" stroke="none" stroke-width="1" />
<rect x="491.8" y="335.5" width="2.0" height="2.0" fill="#fff" stroke="none" stroke-width="1" />
<rect x="492.4" y="328.0" width="2.0" height="2.0" fill="#fff" stroke="none" stroke-width="1" />
<rect x="495.4" y="334.0" width="2.0" height="2.0" fill="#fff" stroke="none" stroke-width="1" />
<rect x="496.0" y="326.5" width="2.0" height="2.0" fill="#fff" stroke="none" stroke-width="1" />
<rect x="499.0" y="332.5" width="2.0" height="2.0" fill="#fff" stroke="none" stroke-width="1" />
<rect x="471.0" y="369.0" width="26.0" height="14.0" fill="#ececec" stroke="#d0d0d0" stroke-width="0.8" />
<rect x="479.0" y="372.5" width="17.5" height="10.0" fill="#8f8f8f" stroke="#aaa" stroke-width="0.8" />
<rect x="480.0" y="373.0" width="7.0" height="2.0" fill="#5c7a99" stroke="none" stroke-width="1" />
<path d="M537 322V407" stroke="#c9c9c9" stroke-width="3" fill="none" stroke-linecap="round" stroke-linejoin="round"/>
<path d="M559.100 322V372" stroke="#d6d6d6" stroke-width="2.6" fill="none" stroke-linecap="round" stroke-linejoin="round"/>
<path d="M478 400H537" stroke="#d6d6d6" stroke-width="2.6" fill="none" stroke-linecap="round" stroke-linejoin="round"/>
<path d="M520 365V398" stroke="#d6d6d6" stroke-width="2.4" fill="none" stroke-linecap="round" stroke-linejoin="round"/>
<path d="M500 345V392" stroke="#d6d6d6" stroke-width="2.4" fill="none" stroke-linecap="round" stroke-linejoin="round"/>
<path d="M562 364H590Q597 365 604 372L640 408" stroke="#c8c8c8" stroke-width="3.4" fill="none" stroke-linecap="round" stroke-linejoin="round"/>
<path d="M545 396V408" stroke="#d6d6d6" stroke-width="2.4" fill="none" stroke-linecap="round" stroke-linejoin="round"/>
<path d="M574 386V408" stroke="#d6d6d6" stroke-width="2.4" fill="none" stroke-linecap="round" stroke-linejoin="round"/>
<path d="M537 322V407" stroke="#fff" stroke-width="1.4" fill="none" stroke-linecap="round" stroke-linejoin="round"/>
<path d="M559.100 322V372" stroke="#fff" stroke-width="1.2" fill="none" stroke-linecap="round" stroke-linejoin="round"/>
<path d="M478 400H537" stroke="#fff" stroke-width="1" fill="none" stroke-linecap="round" stroke-linejoin="round"/>
<path d="M520 365V398" stroke="#fff" stroke-width="1" fill="none" stroke-linecap="round" stroke-linejoin="round"/>
<path d="M500 345V392" stroke="#fff" stroke-width="1" fill="none" stroke-linecap="round" stroke-linejoin="round"/>
<path d="M562 364H590Q597 365 604 372L640 408" stroke="#fff" stroke-width="1.6" fill="none" stroke-linecap="round" stroke-linejoin="round"/>
<path d="M545 396V408" stroke="#fff" stroke-width="1" fill="none" stroke-linecap="round" stroke-linejoin="round"/>
<path d="M574 386V408" stroke="#fff" stroke-width="1" fill="none" stroke-linecap="round" stroke-linejoin="round"/>
<path d="M541.9 341.4L558.3 341.4" stroke="#cfcfcf" stroke-width="0.8" fill="none" />
<path d="M541.9 352.9L558.3 352.9" stroke="#cfcfcf" stroke-width="0.8" fill="none" />
<rect x="566.5" y="372.2" width="15.1" height="12.7" fill="#d4d4d4" stroke="none" stroke-width="1" />
<rect x="551.7" y="397.2" width="15.7" height="7.4" fill="#dedede" stroke="#d2d2d2" stroke-width="0.6" />
<rect x="575.9" y="398.0" width="13.6" height="4.1" fill="#e0e0e0" stroke="#d2d2d2" stroke-width="0.6" />
<rect x="592.0" y="396.0" width="6.0" height="8.0" fill="#fff" stroke="#d2d2d2" stroke-width="0.7" />
<path d="M566.500 347.100L572.300 343L595.300 355.300L592 361.100L587 359.400L585.400 363.500L564.900 351.200Z" stroke="#c2c2c2" stroke-width="0.9" fill="none" />
<path d="M572 350L575.500 347.500L582 351L580 354.500Z" stroke="#c8c8c8" stroke-width="0.8" fill="none" />
<path d="M588.700 370.600L614.300 397.900L609.500 402.500L584 375Z" stroke="#c9c9c9" stroke-width="0.8" fill="#f6f6f6" />
<path d="M590.0 375.0q3 -1.500 4.500 1.500" stroke="#9a9a9a" stroke-width="0.8" fill="none" />
<rect x="590.5" y="372.8" width="1.400" height="1.400" fill="#3f78b0"/>
<path d="M594.7 380.0q3 -1.500 4.500 1.500" stroke="#9a9a9a" stroke-width="0.8" fill="none" />
<rect x="595.2" y="377.8" width="1.400" height="1.400" fill="#3f78b0"/>
<path d="M599.4 385.0q3 -1.500 4.500 1.500" stroke="#9a9a9a" stroke-width="0.8" fill="none" />
<rect x="599.9" y="382.8" width="1.400" height="1.400" fill="#3f78b0"/>
<path d="M604.1 390.0q3 -1.500 4.500 1.500" stroke="#9a9a9a" stroke-width="0.8" fill="none" />
<rect x="604.6" y="387.8" width="1.400" height="1.400" fill="#3f78b0"/>
<path d="M608.8 395.0q3 -1.500 4.500 1.500" stroke="#9a9a9a" stroke-width="0.8" fill="none" />
<rect x="609.3" y="392.8" width="1.400" height="1.400" fill="#3f78b0"/>
<rect x="602.6" y="395.5" width="5.0" height="5.0" fill="#a8a8a8" stroke="none" stroke-width="1" transform="rotate(45 605.100 398)"/>
<path d="M372 474L318 443.500Q314.100 441 314.100 436V424.500Q314.100 416.600 322 416.600H637.800Q646 417 650 423Q655 431 664 433H770" stroke="#b6b6b6" stroke-width="1.0" fill="none" stroke-linejoin="round" stroke-linecap="round"/>
<path d="M311.800 437V424Q312 414.300 322 414.300H366" stroke="#b6b6b6" stroke-width="1.0" fill="none" stroke-linejoin="round" stroke-linecap="round"/>
<rect x="368.4" y="411.0" width="8.6" height="6.5" fill="#fff" stroke="none" stroke-width="1" />
<path d="M368.4 409.0L368.4 416.6" stroke="#b6b6b6" stroke-width="1" fill="none" />
<path d="M377.0 409.0L377.0 416.6" stroke="#b6b6b6" stroke-width="1" fill="none" />
<rect x="385.0" y="411.0" width="9.6" height="6.5" fill="#fff" stroke="none" stroke-width="1" />
<path d="M385.0 409.0L385.0 416.6" stroke="#b6b6b6" stroke-width="1" fill="none" />
<path d="M394.6 409.0L394.6 416.6" stroke="#b6b6b6" stroke-width="1" fill="none" />
<rect x="396.5" y="411.0" width="4.8" height="6.5" fill="#fff" stroke="none" stroke-width="1" />
<path d="M396.5 409.0L396.5 416.6" stroke="#b6b6b6" stroke-width="1" fill="none" />
<path d="M401.3 409.0L401.3 416.6" stroke="#b6b6b6" stroke-width="1" fill="none" />
<rect x="448.0" y="411.0" width="4.6" height="6.5" fill="#fff" stroke="none" stroke-width="1" />
<path d="M448.0 409.0L448.0 416.6" stroke="#b6b6b6" stroke-width="1" fill="none" />
<path d="M452.6 409.0L452.6 416.6" stroke="#b6b6b6" stroke-width="1" fill="none" />
<rect x="456.0" y="411.0" width="7.5" height="6.5" fill="#fff" stroke="none" stroke-width="1" />
<path d="M456.0 409.0L456.0 416.6" stroke="#b6b6b6" stroke-width="1" fill="none" />
<path d="M463.5 409.0L463.5 416.6" stroke="#b6b6b6" stroke-width="1" fill="none" />
<rect x="468.5" y="411.0" width="4.0" height="6.5" fill="#fff" stroke="none" stroke-width="1" />
<path d="M468.5 409.0L468.5 416.6" stroke="#b6b6b6" stroke-width="1" fill="none" />
<path d="M472.5 409.0L472.5 416.6" stroke="#b6b6b6" stroke-width="1" fill="none" />
<rect x="529.0" y="411.0" width="4.0" height="6.5" fill="#fff" stroke="none" stroke-width="1" />
<path d="M529.0 409.0L529.0 416.6" stroke="#b6b6b6" stroke-width="1" fill="none" />
<path d="M533.0 409.0L533.0 416.6" stroke="#b6b6b6" stroke-width="1" fill="none" />
<path d="M332.400 423.200H377Q381.400 423.500 381.400 427.400Q381 430.500 377 431.500Q366 434.500 361.400 439.800Q358.500 444 358.800 448.500Q358.800 450.500 356.500 449L331.500 431.500Q329 429.500 329.200 426.500Q329.500 423.200 332.400 423.200Z" stroke="#b6b6b6" stroke-width="2.600" fill="#fff" stroke-linejoin="round"/>
<path d="M332.400 423.200H377Q381.400 423.500 381.400 427.400Q381 430.500 377 431.500Q366 434.500 361.400 439.800Q358.500 444 358.800 448.500Q358.800 450.500 356.500 449L331.500 431.500Q329 429.500 329.200 426.500Q329.500 423.200 332.400 423.200Z" stroke="#fff" stroke-width="0.800" fill="none" stroke-linejoin="round"/>
<path d="M366.400 446Q366.800 439.800 373 439.800H414.600Q418.700 440 418.700 444.500V469Q418.500 473.900 413 473.900Q403 473.500 393 469.700Q380 464 370 454Q366.200 450 366.400 446Z" stroke="#b6b6b6" stroke-width="2.600" fill="#fff" stroke-linejoin="round"/>
<path d="M366.400 446Q366.800 439.800 373 439.800H414.600Q418.700 440 418.700 444.500V469Q418.500 473.900 413 473.900Q403 473.500 393 469.700Q380 464 370 454Q366.200 450 366.400 446Z" stroke="#fff" stroke-width="0.800" fill="none" stroke-linejoin="round"/>
<path d="M428.700 444.500Q428.700 440 433 440H470Q474 440.300 478 443.500L505 464.500Q517 470 517.300 474.500H432Q428.700 474.500 428.700 470Z" stroke="#b6b6b6" stroke-width="2.600" fill="#fff" stroke-linejoin="round"/>
<path d="M428.700 444.500Q428.700 440 433 440H470Q474 440.300 478 443.500L505 464.500Q517 470 517.300 474.500H432Q428.700 474.500 428.700 470Z" stroke="#fff" stroke-width="0.800" fill="none" stroke-linejoin="round"/>
<rect x="395" y="423" width="58" height="11.500" rx="5.700" fill="#fff" stroke="#b6b6b6" stroke-width="2.600"/>
<rect x="395" y="423" width="58" height="11.500" rx="5.700" fill="none" stroke="#fff" stroke-width="0.800"/>
<rect x="467" y="423" width="45.5" height="11.500" rx="5.700" fill="#fff" stroke="#b6b6b6" stroke-width="2.600"/>
<rect x="467" y="423" width="45.5" height="11.500" rx="5.700" fill="none" stroke="#fff" stroke-width="0.800"/>
<rect x="521.6" y="423" width="116.19999999999993" height="11.500" rx="5.700" fill="#fff" stroke="#b6b6b6" stroke-width="2.600"/>
<rect x="521.6" y="423" width="116.19999999999993" height="11.500" rx="5.700" fill="none" stroke="#fff" stroke-width="0.800"/>
<path d="M381.400 434Q386 433 387 428" stroke="#b6b6b6" stroke-width="1.0" fill="none" stroke-linejoin="round" stroke-linecap="round"/>
<path d="M390 416.600V423Q390 427 393 427" stroke="#b6b6b6" stroke-width="1.0" fill="none" stroke-linejoin="round" stroke-linecap="round"/>
<path d="M512 440.300H581.500V474.500H575Q555 474 535 466L512 457Q507 454 506.700 448Q506.500 441 512 440.300Z" stroke="#b6b6b6" stroke-width="2.600" fill="#fff" stroke-linejoin="round"/>
<path d="M512 440.300H581.500V474.500H575Q555 474 535 466L512 457Q507 454 506.700 448Q506.500 441 512 440.300Z" stroke="#fff" stroke-width="0.800" fill="none" stroke-linejoin="round"/>
<path d="M585.700 440.300H636Q641 440.600 641 446V468Q640.500 474.500 634 474.500H585.700Z" stroke="#b6b6b6" stroke-width="2.600" fill="#fff" stroke-linejoin="round"/>
<path d="M585.700 440.300H636Q641 440.600 641 446V468Q640.500 474.500 634 474.500H585.700Z" stroke="#fff" stroke-width="0.800" fill="none" stroke-linejoin="round"/>
<path d="M655 440.300H783Q787 440.600 787 445V470Q787 474.500 783 474.500H655Q648.600 474.500 648.600 468V447Q649 440.600 655 440.300Z" stroke="#b6b6b6" stroke-width="2.600" fill="#fff" stroke-linejoin="round"/>
<path d="M655 440.300H783Q787 440.600 787 445V470Q787 474.500 783 474.500H655Q648.600 474.500 648.600 468V447Q649 440.600 655 440.300Z" stroke="#fff" stroke-width="0.800" fill="none" stroke-linejoin="round"/>
<path d="M798 440.300H926Q934 440.600 934 447V474.500H798Q794 474.500 794 470V445Q794 440.600 798 440.300Z" stroke="#b6b6b6" stroke-width="2.600" fill="#fff" stroke-linejoin="round"/>
<path d="M798 440.300H926Q934 440.600 934 447V474.500H798Q794 474.500 794 470V445Q794 440.600 798 440.300Z" stroke="#fff" stroke-width="0.800" fill="none" stroke-linejoin="round"/>
<path d="M944.300 435.300L942.300 455L949.200 466.700V482.400" stroke="#b6b6b6" stroke-width="1.0" fill="none" stroke-linejoin="round" stroke-linecap="round"/>
<path d="M745 419.600Q780 426 810 425.500Q830 422 847 413.700" stroke="#c8c8c8" stroke-width="2.6" fill="none" stroke-linecap="round" stroke-linejoin="round"/>
<path d="M745 419.600Q780 426 810 425.500Q830 422 847 413.700" stroke="#fff" stroke-width="1" fill="none" stroke-linecap="round" stroke-linejoin="round"/>
<path d="M472.700 440L478 437" stroke="#b6b6b6" stroke-width="1.0" fill="none" stroke-linejoin="round" stroke-linecap="round"/>
<rect x="668" y="430.200" width="22" height="3.600" rx="1.800" fill="#fff" stroke="#b6b6b6" stroke-width="0.800"/>
<rect x="695" y="430.200" width="35" height="3.600" rx="1.800" fill="#fff" stroke="#b6b6b6" stroke-width="0.800"/>
<rect x="736" y="430.200" width="31" height="3.600" rx="1.800" fill="#fff" stroke="#b6b6b6" stroke-width="0.800"/>
<path d="M582.5 400.0L582.5 440.0" stroke="#b6b6b6" stroke-width="0.9" fill="none" />
<path d="M584.7 400.0L584.7 440.0" stroke="#b6b6b6" stroke-width="0.9" fill="none" />
<rect x="583.0" y="417.1" width="1.3" height="22.7" fill="#fff" stroke="none" stroke-width="1" />
<path d="M453 411H560Q600 411 640 413Q660 415 672 424" stroke="#c6c6c6" stroke-width="2.8" fill="none" stroke-linecap="round" stroke-linejoin="round"/>
<path d="M453 411H560Q600 411 640 413Q660 415 672 424" stroke="#fff" stroke-width="1.2" fill="none" stroke-linecap="round" stroke-linejoin="round"/>
<rect x="847.3" y="351.7" width="30.1" height="4.3" fill="#cfcfcf" stroke="none" stroke-width="1" />
<path d="M847.300 420V359Q847.300 355.600 851 355.600H877.400V369.400H949.300V402.900L952.200 405V427Q952.200 432.400 946 432.400Q939.400 432.400 939.400 427V396Q939.400 382.200 932.500 382.200Q925.700 382.200 925.700 396V420Q925.700 426.500 916.800 426.500Q907.900 426.500 907.900 420V396Q907.900 382.200 901.500 382.200Q895.100 382.200 895.100 396V420Q895.100 426.500 885.700 426.500Q876.400 426.500 876.400 420V390Q876 377 871 373Q865.600 377 865.600 390V420Q865.600 426.500 856.400 426.500Q847.300 426.500 847.300 420Z" stroke="none" stroke-width="1" fill="#b3b3b3" />
<rect x="880.4" y="352.6" width="7.8" height="11.9" fill="#b9b9b9" stroke="#d8d8d8" stroke-width="0.6" />
<rect x="952.2" y="380.8" width="17.2" height="14.2" fill="#d9d9d9" stroke="#c8c8c8" stroke-width="0.7" />
<path d="M943 374.300l4.500 -2.500v5z" fill="#e8262a"/>
<path d="M350.500 506.500V454.500H920" stroke="#222" stroke-width="1.1" fill="none" stroke-dasharray="9 3.800"/>
<path d="M350.500 506.500H939V496" stroke="#222" stroke-width="1.1" fill="none" stroke-dasharray="9 3.800"/>
<path d="M949.200 482.400V485.800H940" stroke="#b6b6b6" stroke-width="1.0" fill="none" stroke-linejoin="round" stroke-linecap="round"/>
<rect x="373.8" y="476.0" width="566.2" height="10.0" fill="#fff" stroke="none" stroke-width="1" />
<path d="M373.8 476.9L923.5 476.9" stroke="#000" stroke-width="1.8" fill="none" />
<path d="M373.8 485.2L939.8 485.2" stroke="#000" stroke-width="1.8" fill="none" />
<rect x="373.8" y="476.0" width="10.2" height="10.0" fill="#000" stroke="none" stroke-width="1" />
<path d="M384 478.500h5l3 2.500h-8z" stroke="none" stroke-width="1" fill="#000" />
<rect x="896.9" y="477.5" width="7.4" height="7.5" fill="#000" stroke="none" stroke-width="1" />
<path d="M897 479.500h-6l-3 2.600h9z" stroke="none" stroke-width="1" fill="#000" />
<rect x="383.0" y="474.300" width="1.600" height="1.200" fill="#e018e0"/>
<rect x="394.1" y="474.300" width="1.600" height="1.200" fill="#e018e0"/>
<rect x="405.3" y="474.300" width="1.600" height="1.200" fill="#e018e0"/>
<rect x="416.4" y="474.300" width="1.600" height="1.200" fill="#e018e0"/>
<rect x="427.6" y="474.300" width="1.600" height="1.200" fill="#e018e0"/>
<rect x="438.8" y="474.300" width="1.600" height="1.200" fill="#e018e0"/>
<rect x="449.9" y="474.300" width="1.600" height="1.200" fill="#e018e0"/>
<rect x="461.1" y="474.300" width="1.600" height="1.200" fill="#e018e0"/>
<rect x="472.2" y="474.300" width="1.600" height="1.200" fill="#e018e0"/>
<rect x="483.4" y="474.300" width="1.600" height="1.200" fill="#e018e0"/>
<rect x="494.5" y="474.300" width="1.600" height="1.200" fill="#e018e0"/>
<rect x="505.6" y="474.300" width="1.600" height="1.200" fill="#e018e0"/>
<rect x="516.8" y="474.300" width="1.600" height="1.200" fill="#e018e0"/>
<rect x="528.0" y="474.300" width="1.600" height="1.200" fill="#e018e0"/>
<rect x="539.1" y="474.300" width="1.600" height="1.200" fill="#e018e0"/>
<rect x="550.2" y="474.300" width="1.600" height="1.200" fill="#e018e0"/>
<rect x="561.4" y="474.300" width="1.600" height="1.200" fill="#e018e0"/>
<rect x="572.5" y="474.300" width="1.600" height="1.200" fill="#e018e0"/>
<rect x="583.7" y="474.300" width="1.600" height="1.200" fill="#e018e0"/>
<rect x="594.9" y="474.300" width="1.600" height="1.200" fill="#e018e0"/>
<rect x="606.0" y="474.300" width="1.600" height="1.200" fill="#e018e0"/>
<rect x="617.1" y="474.300" width="1.600" height="1.200" fill="#e018e0"/>
<rect x="628.3" y="474.300" width="1.600" height="1.200" fill="#e018e0"/>
<rect x="639.5" y="474.300" width="1.600" height="1.200" fill="#e018e0"/>
<rect x="650.6" y="474.300" width="1.600" height="1.200" fill="#e018e0"/>
<rect x="661.8" y="474.300" width="1.600" height="1.200" fill="#e018e0"/>
<rect x="672.9" y="474.300" width="1.600" height="1.200" fill="#e018e0"/>
<rect x="684.0" y="474.300" width="1.600" height="1.200" fill="#e018e0"/>
<rect x="695.2" y="474.300" width="1.600" height="1.200" fill="#e018e0"/>
<rect x="706.4" y="474.300" width="1.600" height="1.200" fill="#e018e0"/>
<rect x="717.5" y="474.300" width="1.600" height="1.200" fill="#e018e0"/>
<rect x="728.7" y="474.300" width="1.600" height="1.200" fill="#e018e0"/>
<rect x="739.8" y="474.300" width="1.600" height="1.200" fill="#e018e0"/>
<rect x="751.0" y="474.300" width="1.600" height="1.200" fill="#e018e0"/>
<rect x="762.1" y="474.300" width="1.600" height="1.200" fill="#e018e0"/>
<rect x="773.2" y="474.300" width="1.600" height="1.200" fill="#e018e0"/>
<rect x="784.4" y="474.300" width="1.600" height="1.200" fill="#e018e0"/>
<rect x="795.5" y="474.300" width="1.600" height="1.200" fill="#e018e0"/>
<rect x="806.7" y="474.300" width="1.600" height="1.200" fill="#e018e0"/>
<rect x="817.9" y="474.300" width="1.600" height="1.200" fill="#e018e0"/>
<rect x="829.0" y="474.300" width="1.600" height="1.200" fill="#e018e0"/>
<rect x="840.2" y="474.300" width="1.600" height="1.200" fill="#e018e0"/>
<rect x="851.3" y="474.300" width="1.600" height="1.200" fill="#e018e0"/>
<rect x="862.5" y="474.300" width="1.600" height="1.200" fill="#e018e0"/>
<rect x="873.6" y="474.300" width="1.600" height="1.200" fill="#e018e0"/>
<rect x="884.8" y="474.300" width="1.600" height="1.200" fill="#e018e0"/>
<rect x="895.9" y="474.300" width="1.600" height="1.200" fill="#e018e0"/>
<rect x="907.1" y="474.300" width="1.600" height="1.200" fill="#e018e0"/>
<rect x="918.2" y="474.300" width="1.600" height="1.200" fill="#e018e0"/>
<rect x="388.0" y="486.600" width="1.200" height="0.800" fill="#f3c4f3"/>
<rect x="399.1" y="486.600" width="1.200" height="0.800" fill="#f3c4f3"/>
<rect x="410.3" y="486.600" width="1.200" height="0.800" fill="#f3c4f3"/>
<rect x="421.4" y="486.600" width="1.200" height="0.800" fill="#f3c4f3"/>
<rect x="432.6" y="486.600" width="1.200" height="0.800" fill="#f3c4f3"/>
<rect x="443.8" y="486.600" width="1.200" height="0.800" fill="#f3c4f3"/>
<rect x="454.9" y="486.600" width="1.200" height="0.800" fill="#f3c4f3"/>
<rect x="466.1" y="486.600" width="1.200" height="0.800" fill="#f3c4f3"/>
<rect x="477.2" y="486.600" width="1.200" height="0.800" fill="#f3c4f3"/>
<rect x="488.4" y="486.600" width="1.200" height="0.800" fill="#f3c4f3"/>
<rect x="499.5" y="486.600" width="1.200" height="0.800" fill="#f3c4f3"/>
<rect x="510.6" y="486.600" width="1.200" height="0.800" fill="#f3c4f3"/>
<rect x="521.8" y="486.600" width="1.200" height="0.800" fill="#f3c4f3"/>
<rect x="533.0" y="486.600" width="1.200" height="0.800" fill="#f3c4f3"/>
<rect x="544.1" y="486.600" width="1.200" height="0.800" fill="#f3c4f3"/>
<rect x="555.2" y="486.600" width="1.200" height="0.800" fill="#f3c4f3"/>
<rect x="566.4" y="486.600" width="1.200" height="0.800" fill="#f3c4f3"/>
<rect x="577.5" y="486.600" width="1.200" height="0.800" fill="#f3c4f3"/>
<rect x="588.7" y="486.600" width="1.200" height="0.800" fill="#f3c4f3"/>
<rect x="599.9" y="486.600" width="1.200" height="0.800" fill="#f3c4f3"/>
<rect x="611.0" y="486.600" width="1.200" height="0.800" fill="#f3c4f3"/>
<rect x="622.1" y="486.600" width="1.200" height="0.800" fill="#f3c4f3"/>
<rect x="633.3" y="486.600" width="1.200" height="0.800" fill="#f3c4f3"/>
<rect x="644.5" y="486.600" width="1.200" height="0.800" fill="#f3c4f3"/>
<rect x="655.6" y="486.600" width="1.200" height="0.800" fill="#f3c4f3"/>
<rect x="666.8" y="486.600" width="1.200" height="0.800" fill="#f3c4f3"/>
<rect x="677.9" y="486.600" width="1.200" height="0.800" fill="#f3c4f3"/>
<rect x="689.0" y="486.600" width="1.200" height="0.800" fill="#f3c4f3"/>
<rect x="700.2" y="486.600" width="1.200" height="0.800" fill="#f3c4f3"/>
<rect x="711.4" y="486.600" width="1.200" height="0.800" fill="#f3c4f3"/>
<rect x="722.5" y="486.600" width="1.200" height="0.800" fill="#f3c4f3"/>
<rect x="733.7" y="486.600" width="1.200" height="0.800" fill="#f3c4f3"/>
<rect x="744.8" y="486.600" width="1.200" height="0.800" fill="#f3c4f3"/>
<rect x="756.0" y="486.600" width="1.200" height="0.800" fill="#f3c4f3"/>
<rect x="767.1" y="486.600" width="1.200" height="0.800" fill="#f3c4f3"/>
<rect x="778.2" y="486.600" width="1.200" height="0.800" fill="#f3c4f3"/>
<rect x="789.4" y="486.600" width="1.200" height="0.800" fill="#f3c4f3"/>
<rect x="800.5" y="486.600" width="1.200" height="0.800" fill="#f3c4f3"/>
<rect x="811.7" y="486.600" width="1.200" height="0.800" fill="#f3c4f3"/>
<rect x="822.9" y="486.600" width="1.200" height="0.800" fill="#f3c4f3"/>
<rect x="834.0" y="486.600" width="1.200" height="0.800" fill="#f3c4f3"/>
<rect x="845.2" y="486.600" width="1.200" height="0.800" fill="#f3c4f3"/>
<rect x="856.3" y="486.600" width="1.200" height="0.800" fill="#f3c4f3"/>
<rect x="867.5" y="486.600" width="1.200" height="0.800" fill="#f3c4f3"/>
<rect x="878.6" y="486.600" width="1.200" height="0.800" fill="#f3c4f3"/>
<rect x="889.8" y="486.600" width="1.200" height="0.800" fill="#f3c4f3"/>
<path d="M234.5 480.7L372.0 480.7" stroke="#22e022" stroke-width="1.8" fill="none" stroke-dasharray="2 2.400"/>
<path d="M906.0 480.7L957.0 480.7" stroke="#22e022" stroke-width="1.8" fill="none" stroke-dasharray="2 3.400"/>
<path d="M373.0 473.0L373.0 489.0" stroke="#22e022" stroke-width="1" fill="none" />
<path d="M905.0 474.0L905.0 488.0" stroke="#22e022" stroke-width="1.2" fill="none" />
<path d="M372.0 474.0L372.0 488.0" stroke="#d03030" stroke-width="0.8" fill="none" />
<path d="M911 476.500Q912.500 481 911 485.500" stroke="#e02020" stroke-width="1" fill="none" />
<path d="M460.5 467.0L460.5 474.0" stroke="#22e022" stroke-width="1" fill="none" />
<path d="M836.5 486.0L836.5 494.0" stroke="#22e022" stroke-width="1" fill="none" />
</g>
<g clip-path="url(#clipM)">
<path d="M359.8 416.6L359.8 424.9" stroke="#000" stroke-width="1.8" fill="none" />
<path d="M374.2 432.4L376.7 439.0" stroke="#000" stroke-width="2" fill="none" />
<path d="M349.5 443.7L346.2 449.8" stroke="#000" stroke-width="2.2" fill="none" />
<path d="M376.4 457.3L372.2 463.9" stroke="#000" stroke-width="1.3" fill="none" />
<path d="M376.4 457.3L374.2 455.9" stroke="#000" stroke-width="1.3" fill="none" />
<path d="M375.3 458.9L373.2 457.6" stroke="#000" stroke-width="1.3" fill="none" />
<path d="M374.3 460.6L372.1 459.2" stroke="#000" stroke-width="1.3" fill="none" />
<path d="M373.2 462.2L371.1 460.9" stroke="#000" stroke-width="1.3" fill="none" />
<path d="M372.2 463.9L370.0 462.5" stroke="#000" stroke-width="1.3" fill="none" />
<path d="M398.8 413.3L398.8 421.6" stroke="#000" stroke-width="2" fill="none" />
<path d="M399.1 433.2L399.1 440.7" stroke="#000" stroke-width="2" fill="none" />
<path d="M417.9 446.5L429.5 446.5" stroke="#000" stroke-width="2.6" fill="none" />
<path d="M427.8 464.3L419.5 464.3" stroke="#000" stroke-width="1.3" fill="none" />
<path d="M427.8 464.3L427.8 461.7" stroke="#000" stroke-width="1.3" fill="none" />
<path d="M425.7 464.3L425.7 461.7" stroke="#000" stroke-width="1.3" fill="none" />
<path d="M423.6 464.3L423.6 461.7" stroke="#000" stroke-width="1.3" fill="none" />
<path d="M421.6 464.3L421.6 461.7" stroke="#000" stroke-width="1.3" fill="none" />
<path d="M419.5 464.3L419.5 461.7" stroke="#000" stroke-width="1.3" fill="none" />
<path d="M450.3 415.8L450.3 424.9" stroke="#000" stroke-width="1.8" fill="none" />
<path d="M456.0 410.0L463.5 410.0" stroke="#000" stroke-width="2.2" fill="none" />
<path d="M470.5 415.8L470.5 424.1" stroke="#000" stroke-width="2" fill="none" />
<path d="M453.6 428.6L466.0 428.6" stroke="#000" stroke-width="2.2" fill="none" />
<path d="M368.4 407.1L376.7 407.1" stroke="#000" stroke-width="2.6" fill="none" />
<path d="M385.0 407.1L394.6 407.1" stroke="#000" stroke-width="2.6" fill="none" />
<path d="M490.1 444.0L486.8 452.3" stroke="#000" stroke-width="2.2" fill="none" />
<path d="M499.2 447.0L507.5 447.0" stroke="#000" stroke-width="2.2" fill="none" />
<path d="M511.7 457.3L507.5 463.9" stroke="#000" stroke-width="1.3" fill="none" />
<path d="M511.7 457.3L509.5 455.9" stroke="#000" stroke-width="1.3" fill="none" />
<path d="M510.6 458.9L508.5 457.6" stroke="#000" stroke-width="1.3" fill="none" />
<path d="M509.6 460.6L507.4 459.2" stroke="#000" stroke-width="1.3" fill="none" />
<path d="M508.6 462.2L506.4 460.9" stroke="#000" stroke-width="1.3" fill="none" />
<path d="M507.5 463.9L505.3 462.5" stroke="#000" stroke-width="1.3" fill="none" />
<path d="M531.0 415.8L531.0 424.6" stroke="#000" stroke-width="1.8" fill="none" />
<path d="M531.5 433.2L531.5 440.7" stroke="#000" stroke-width="2" fill="none" />
<path d="M623.4 432.4L623.4 440.7" stroke="#000" stroke-width="2" fill="none" />
<path d="M636.1 428.6L651.4 428.6" stroke="#000" stroke-width="2.2" fill="none" />
<path d="M663.5 434.0L663.5 441.2" stroke="#000" stroke-width="2" fill="none" />
<path d="M638.6 447.3L651.4 447.3" stroke="#000" stroke-width="2.6" fill="none" />
<path d="M648.6 464.8L640.0 464.8" stroke="#000" stroke-width="1.3" fill="none" />
<path d="M648.6 464.8L648.6 462.2" stroke="#000" stroke-width="1.3" fill="none" />
<path d="M646.5 464.8L646.5 462.2" stroke="#000" stroke-width="1.3" fill="none" />
<path d="M644.3 464.8L644.3 462.2" stroke="#000" stroke-width="1.3" fill="none" />
<path d="M642.1 464.8L642.1 462.2" stroke="#000" stroke-width="1.3" fill="none" />
<path d="M640.0 464.8L640.0 462.2" stroke="#000" stroke-width="1.3" fill="none" />
<path d="M777.5 432.8L777.5 440.0" stroke="#000" stroke-width="2" fill="none" />
<path d="M784.8 444.8L793.3 444.8" stroke="#000" stroke-width="2.6" fill="none" />
<path d="M794.0 461.0L785.5 461.0" stroke="#000" stroke-width="1.3" fill="none" />
<path d="M794.0 461.0L794.0 458.4" stroke="#000" stroke-width="1.3" fill="none" />
<path d="M791.9 461.0L791.9 458.4" stroke="#000" stroke-width="1.3" fill="none" />
<path d="M789.8 461.0L789.8 458.4" stroke="#000" stroke-width="1.3" fill="none" />
<path d="M787.6 461.0L787.6 458.4" stroke="#000" stroke-width="1.3" fill="none" />
<path d="M785.5 461.0L785.5 458.4" stroke="#000" stroke-width="1.3" fill="none" />
<path d="M867.8 416.3L875.8 416.3" stroke="#000" stroke-width="2.4" fill="none" />
<path d="M938.4 435.3L930.6 443.6" stroke="#000" stroke-width="2.4" fill="none" />
<path d="M940.5 458.5L933.9 458.5" stroke="#000" stroke-width="1.3" fill="none" />
<path d="M940.5 458.5L940.5 455.9" stroke="#000" stroke-width="1.3" fill="none" />
<path d="M938.9 458.5L938.9 455.9" stroke="#000" stroke-width="1.3" fill="none" />
<path d="M937.2 458.5L937.2 455.9" stroke="#000" stroke-width="1.3" fill="none" />
<path d="M935.5 458.5L935.5 455.9" stroke="#000" stroke-width="1.3" fill="none" />
<path d="M933.9 458.5L933.9 455.9" stroke="#000" stroke-width="1.3" fill="none" />
<circle cx="500.900" cy="449.800" r="9.500" fill="none" stroke="#000" stroke-width="1.100"/>
<path d="M500.9 405.0L500.9 440.5" stroke="#000" stroke-width="1.3" fill="none" />
<text x="500.9" y="402.5" font-size="7" text-anchor="middle" fill="#111" stroke="#111" stroke-width="0.13" >HS2</text>
<circle cx="459.500" cy="404" r="5.200" fill="#fff" stroke="#000" stroke-width="1.100"/>
<path d="M463.5 400.5L472.0 392.5" stroke="#000" stroke-width="1.3" fill="none" />
<text x="476.0" y="391.7" font-size="7" text-anchor="middle" fill="#111" stroke="#111" stroke-width="0.13" >HS1</text>
<circle cx="871.100" cy="370" r="5.300" fill="none" stroke="#000" stroke-width="1.100"/>
<path d="M876.4 352.6L872.5 367.4" stroke="#000" stroke-width="1.5" fill="none" />
<text x="871.5" y="351.7" font-size="6.5" text-anchor="start" fill="#111" stroke="#111" stroke-width="0.13" >HS3</text>
<rect x="317.8" y="424.7" width="5.7" height="6.4" fill="#a0c3e2" stroke="none" stroke-width="1" />
<text x="318.3" y="429.9" font-size="6.5" text-anchor="start" font-weight="bold" fill="#1b2640" stroke="#1b2640" stroke-width="0.08" >U</text>
<rect x="383.8" y="422.5" width="5.3" height="6.4" fill="#a0c3e2" stroke="none" stroke-width="1" />
<text x="384.3" y="427.7" font-size="6.5" text-anchor="start" font-weight="bold" fill="#1b2640" stroke="#1b2640" stroke-width="0.08" >V</text>
<rect x="385.5" y="431.3" width="5.7" height="6.4" fill="#a0c3e2" stroke="none" stroke-width="1" />
<text x="386.0" y="436.5" font-size="6.5" text-anchor="start" font-weight="bold" fill="#1b2640" stroke="#1b2640" stroke-width="0.08" >C</text>
<rect x="373.4" y="440.5" width="9.3" height="6.4" fill="#a0c3e2" stroke="none" stroke-width="1" />
<text x="373.9" y="445.7" font-size="6.5" text-anchor="start" font-weight="bold" fill="#1b2640" stroke="#1b2640" stroke-width="0.08" >C7</text>
<rect x="394.6" y="440.5" width="9.3" height="6.4" fill="#a0c3e2" stroke="none" stroke-width="1" />
<text x="395.1" y="445.7" font-size="6.5" text-anchor="start" font-weight="bold" fill="#1b2640" stroke="#1b2640" stroke-width="0.08" >C6</text>
<rect x="408.3" y="443.8" width="9.7" height="6.4" fill="#a0c3e2" stroke="none" stroke-width="1" />
<text x="408.8" y="449.0" font-size="6.5" text-anchor="start" font-weight="bold" fill="#1b2640" stroke="#1b2640" stroke-width="0.08" >G1</text>
<rect x="341.0" y="449.6" width="9.3" height="6.4" fill="#a0c3e2" stroke="none" stroke-width="1" />
<text x="341.5" y="454.8" font-size="6.5" text-anchor="start" font-weight="bold" fill="#1b2640" stroke="#1b2640" stroke-width="0.08" >U1</text>
<rect x="375.0" y="462.8" width="5.7" height="6.4" fill="#a0c3e2" stroke="none" stroke-width="1" />
<text x="375.5" y="468.0" font-size="6.5" text-anchor="start" font-weight="bold" fill="#1b2640" stroke="#1b2640" stroke-width="0.08" >H</text>
<rect x="395.5" y="407.8" width="8.6" height="6.4" fill="#a0c3e2" stroke="none" stroke-width="1" />
<text x="396.0" y="413.0" font-size="6.5" text-anchor="start" font-weight="bold" fill="#1b2640" stroke="#1b2640" stroke-width="0.08" >L5</text>
<rect x="447.3" y="409.8" width="8.6" height="6.4" fill="#a0c3e2" stroke="none" stroke-width="1" />
<text x="447.8" y="415.0" font-size="6.5" text-anchor="start" font-weight="bold" fill="#1b2640" stroke="#1b2640" stroke-width="0.08" >L4</text>
<rect x="466.4" y="410.6" width="8.6" height="6.4" fill="#a0c3e2" stroke="none" stroke-width="1" />
<text x="466.9" y="415.8" font-size="6.5" text-anchor="start" font-weight="bold" fill="#1b2640" stroke="#1b2640" stroke-width="0.08" >L3</text>
<rect x="456.9" y="429.7" width="7.1" height="6.4" fill="#a0c3e2" stroke="none" stroke-width="1" />
<text x="457.4" y="434.9" font-size="6.5" text-anchor="start" font-weight="bold" fill="#1b2640" stroke="#1b2640" stroke-width="0.08" >W</text>
<rect x="489.6" y="416.4" width="5.0" height="6.4" fill="#a0c3e2" stroke="none" stroke-width="1" />
<text x="490.1" y="421.6" font-size="6.5" text-anchor="start" font-weight="bold" fill="#1b2640" stroke="#1b2640" stroke-width="0.08" >L</text>
<rect x="436.5" y="434.6" width="5.7" height="6.4" fill="#a0c3e2" stroke="none" stroke-width="1" />
<text x="437.0" y="439.8" font-size="6.5" text-anchor="start" font-weight="bold" fill="#1b2640" stroke="#1b2640" stroke-width="0.08" >C</text>
<rect x="514.2" y="428.0" width="5.3" height="6.4" fill="#a0c3e2" stroke="none" stroke-width="1" />
<text x="514.7" y="433.2" font-size="6.5" text-anchor="start" font-weight="bold" fill="#1b2640" stroke="#1b2640" stroke-width="0.08" >Y</text>
<rect x="480.5" y="441.3" width="5.3" height="6.4" fill="#a0c3e2" stroke="none" stroke-width="1" />
<text x="481.0" y="446.5" font-size="6.5" text-anchor="start" font-weight="bold" fill="#1b2640" stroke="#1b2640" stroke-width="0.08" >E</text>
<rect x="480.5" y="452.9" width="8.9" height="6.4" fill="#a0c3e2" stroke="none" stroke-width="1" />
<text x="481.0" y="458.1" font-size="6.5" text-anchor="start" font-weight="bold" fill="#1b2640" stroke="#1b2640" stroke-width="0.08" >E1</text>
<rect x="511.2" y="445.4" width="8.6" height="6.4" fill="#a0c3e2" stroke="none" stroke-width="1" />
<text x="511.7" y="450.6" font-size="6.5" text-anchor="start" font-weight="bold" fill="#1b2640" stroke="#1b2640" stroke-width="0.08" >F1</text>
<rect x="513.7" y="459.6" width="5.3" height="6.4" fill="#a0c3e2" stroke="none" stroke-width="1" />
<text x="514.2" y="464.8" font-size="6.5" text-anchor="start" font-weight="bold" fill="#1b2640" stroke="#1b2640" stroke-width="0.08" >E</text>
<rect x="527.7" y="410.6" width="8.6" height="6.4" fill="#a0c3e2" stroke="none" stroke-width="1" />
<text x="528.2" y="415.8" font-size="6.5" text-anchor="start" font-weight="bold" fill="#1b2640" stroke="#1b2640" stroke-width="0.08" >L2</text>
<rect x="575.0" y="434.6" width="5.7" height="6.4" fill="#a0c3e2" stroke="none" stroke-width="1" />
<text x="575.5" y="439.8" font-size="6.5" text-anchor="start" font-weight="bold" fill="#1b2640" stroke="#1b2640" stroke-width="0.08" >C</text>
<rect x="527.7" y="441.3" width="9.3" height="6.4" fill="#a0c3e2" stroke="none" stroke-width="1" />
<text x="528.2" y="446.5" font-size="6.5" text-anchor="start" font-weight="bold" fill="#1b2640" stroke="#1b2640" stroke-width="0.08" >C5</text>
<rect x="619.4" y="440.8" width="9.3" height="6.4" fill="#a0c3e2" stroke="none" stroke-width="1" />
<text x="619.9" y="446.0" font-size="6.5" text-anchor="start" font-weight="bold" fill="#1b2640" stroke="#1b2640" stroke-width="0.08" >C4</text>
<rect x="639.8" y="421.4" width="5.0" height="6.4" fill="#a0c3e2" stroke="none" stroke-width="1" />
<text x="640.3" y="426.6" font-size="6.5" text-anchor="start" font-weight="bold" fill="#1b2640" stroke="#1b2640" stroke-width="0.08" >Z</text>
<rect x="652.5" y="424.7" width="8.6" height="6.4" fill="#a0c3e2" stroke="none" stroke-width="1" />
<text x="653.0" y="429.9" font-size="6.5" text-anchor="start" font-weight="bold" fill="#1b2640" stroke="#1b2640" stroke-width="0.08" >Z1</text>
<rect x="660.9" y="427.5" width="9.3" height="6.4" fill="#a0c3e2" stroke="none" stroke-width="1" />
<text x="661.4" y="432.7" font-size="6.5" text-anchor="start" font-weight="bold" fill="#1b2640" stroke="#1b2640" stroke-width="0.08" >C3</text>
<rect x="641.8" y="455.9" width="5.7" height="6.4" fill="#a0c3e2" stroke="none" stroke-width="1" />
<text x="642.3" y="461.1" font-size="6.5" text-anchor="start" font-weight="bold" fill="#1b2640" stroke="#1b2640" stroke-width="0.08" >D</text>
<rect x="773.2" y="426.3" width="9.3" height="6.4" fill="#a0c3e2" stroke="none" stroke-width="1" />
<text x="773.7" y="431.5" font-size="6.5" text-anchor="start" font-weight="bold" fill="#1b2640" stroke="#1b2640" stroke-width="0.08" >C2</text>
<rect x="795.1" y="442.2" width="9.3" height="6.4" fill="#a0c3e2" stroke="none" stroke-width="1" />
<text x="795.6" y="447.4" font-size="6.5" text-anchor="start" font-weight="bold" fill="#1b2640" stroke="#1b2640" stroke-width="0.08" >B1</text>
<rect x="786.5" y="451.3" width="5.7" height="6.4" fill="#a0c3e2" stroke="none" stroke-width="1" />
<text x="787.0" y="456.5" font-size="6.5" text-anchor="start" font-weight="bold" fill="#1b2640" stroke="#1b2640" stroke-width="0.08" >B</text>
<rect x="386.9" y="394.3" width="9.7" height="6.4" fill="#a0c3e2" stroke="none" stroke-width="1" />
<text x="387.4" y="399.5" font-size="6.5" text-anchor="start" font-weight="bold" fill="#1b2640" stroke="#1b2640" stroke-width="0.08" >LB</text>
<rect x="452.7" y="391.8" width="9.7" height="6.4" fill="#a0c3e2" stroke="none" stroke-width="1" />
<text x="453.2" y="397.0" font-size="6.5" text-anchor="start" font-weight="bold" fill="#1b2640" stroke="#1b2640" stroke-width="0.08" >LC</text>
<rect x="367.9" y="394.3" width="9.7" height="6.4" fill="#a0c3e2" stroke="none" stroke-width="1" />
<text x="368.4" y="399.5" font-size="6.5" text-anchor="start" font-weight="bold" fill="#1b2640" stroke="#1b2640" stroke-width="0.08" >LA</text>
<text x="337.9" y="420.8" font-size="6.3" text-anchor="start" fill="#222" stroke="#222" stroke-width="0.13" >L</text>
<text x="356.5" y="430.7" font-size="6.3" text-anchor="start" fill="#222" stroke="#222" stroke-width="0.13" >L6</text>
<text x="421.2" y="459.4" font-size="6.3" text-anchor="start" fill="#222" stroke="#222" stroke-width="0.13" >G</text>
<text x="443.1" y="430.7" font-size="6.3" text-anchor="start" fill="#222" stroke="#222" stroke-width="0.13" >W1</text>
<text x="575.5" y="422.4" font-size="6.3" text-anchor="start" fill="#222" stroke="#222" stroke-width="0.13" >L</text>
<text x="630.3" y="450.6" font-size="6.3" text-anchor="start" fill="#222" stroke="#222" stroke-width="0.13" >D1</text>
<text x="754.4" y="437.5" font-size="6.3" text-anchor="start" fill="#222" stroke="#222" stroke-width="0.13" >C</text>
<text x="882.0" y="437.5" font-size="6.3" text-anchor="start" fill="#222" stroke="#222" stroke-width="0.13" >C</text>
<text x="497.5" y="445.2" font-size="6.3" text-anchor="start" fill="#222" stroke="#222" stroke-width="0.13" >E</text>
<rect x="835.6" y="404.8" width="9.7" height="6.4" fill="#a0c3e2" stroke="none" stroke-width="1" />
<text x="836.1" y="410.0" font-size="6.5" text-anchor="start" font-weight="bold" fill="#1b2640" stroke="#1b2640" stroke-width="0.08" >CT</text>
<rect x="866.7" y="405.5" width="10.7" height="6.6" fill="#a0c3e2" stroke="none" stroke-width="1" />
<text x="867.2" y="410.9" font-size="6.7" text-anchor="start" font-weight="bold" fill="#1b2640" stroke="#1b2640" stroke-width="0.08" >CU</text>
<text x="896.4" y="410.9" font-size="6.8" text-anchor="start" fill="#222" stroke="#222" stroke-width="0.13" >CV</text>
<rect x="925.3" y="405.5" width="12.2" height="6.6" fill="#a0c3e2" stroke="none" stroke-width="1" />
<text x="925.8" y="410.9" font-size="6.7" text-anchor="start" font-weight="bold" fill="#1b2640" stroke="#1b2640" stroke-width="0.08" >CW</text>
<text x="876.7" y="418.2" font-size="5" text-anchor="start" fill="#222" stroke="#222" stroke-width="0.13" >CU1</text>
<rect x="934.1" y="448.8" width="5.7" height="6.4" fill="#a0c3e2" stroke="none" stroke-width="1" />
<text x="934.6" y="454.0" font-size="6.5" text-anchor="start" font-weight="bold" fill="#1b2640" stroke="#1b2640" stroke-width="0.08" >A</text>
<text x="927.0" y="440.0" font-size="6" text-anchor="start" fill="#222" stroke="#222" stroke-width="0.13" >C</text>
<text x="455.2" y="446.0" font-size="6" text-anchor="start" font-weight="bold" fill="#22dd22" stroke="#22dd22" stroke-width="0.08" >1</text>
<text x="558.0" y="447.0" font-size="6" text-anchor="start" font-weight="bold" fill="#22dd22" stroke="#22dd22" stroke-width="0.08" >1</text>
<text x="846.6" y="448.5" font-size="6" text-anchor="start" font-weight="bold" fill="#22dd22" stroke="#22dd22" stroke-width="0.08" >1</text>
<rect x="464.5" y="461.0" width="23.5" height="6.2" fill="#a0c3e2" stroke="none" stroke-width="1" />
<text x="465.0" y="466.0" font-size="6.3" text-anchor="start" font-weight="bold" fill="#1b2640" stroke="#1b2640" stroke-width="0.08" >PAPI 3°</text>
<rect x="802.8" y="489.3" width="32.2" height="6.2" fill="#a0c3e2" stroke="none" stroke-width="1" />
<text x="803.3" y="494.3" font-size="6.3" text-anchor="start" font-weight="bold" fill="#1b2640" stroke="#1b2640" stroke-width="0.08" >PAPI 2.75°</text>
<g transform="translate(360.4 377.5) rotate(-90)">
<rect x="-18.4" y="-4.1" width="36.7" height="5.0" fill="#86a3c2" stroke="none" stroke-width="1" />
<text x="0.0" y="0.0" font-size="5.1" text-anchor="middle" font-weight="bold" fill="#1b2640" stroke="#1b2640" stroke-width="0.08" >STAND 11A-14</text>
</g>
<g transform="translate(403.8 371) rotate(-90)">
<rect x="-18.4" y="-4.1" width="36.7" height="5.0" fill="#86a3c2" stroke="none" stroke-width="1" />
<text x="0.0" y="0.0" font-size="5.1" text-anchor="middle" font-weight="bold" fill="#1b2640" stroke="#1b2640" stroke-width="0.08" >STAND 22A-26</text>
</g>
<g transform="translate(446.8 374.6) rotate(-90)">
<rect x="-18.4" y="-4.1" width="36.7" height="5.0" fill="#86a3c2" stroke="none" stroke-width="1" />
<text x="0.0" y="0.0" font-size="5.1" text-anchor="middle" font-weight="bold" fill="#1b2640" stroke="#1b2640" stroke-width="0.08" >STAND 41-48A</text>
</g>
<g transform="translate(425.500 354.500) rotate(-90)">
<text x="0.0" y="0.0" font-size="5.1" text-anchor="middle" fill="#111" stroke="#111" stroke-width="0.13" >TERMINAL</text>
</g>
<g transform="translate(383 345.500) rotate(8)">
<text x="0.0" y="0.0" font-size="3.8" text-anchor="middle" font-weight="bold" fill="#1d3557" stroke="#1d3557" stroke-width="0.08" >STAND 15-21</text>
</g>
<rect x="403.4" y="404.6" width="27.0" height="4.4" fill="#86a3c2" stroke="none" stroke-width="1" />
<text x="417.0" y="408.0" font-size="3.8" text-anchor="middle" font-weight="bold" fill="#1b2640" stroke="#1b2640" stroke-width="0.08" >STAND 27A-33</text>
<g transform="translate(857.8 400) rotate(-90)">
<rect x="-17.7" y="-3.9" width="35.3" height="4.8" fill="#86a3c2" stroke="none" stroke-width="1" />
<text x="0.0" y="0.0" font-size="4.9" text-anchor="middle" font-weight="bold" fill="#1b2640" stroke="#1b2640" stroke-width="0.08" >STAND 61-64B</text>
</g>
<g transform="translate(888.8 395.5) rotate(-90)">
<rect x="-15.9" y="-3.9" width="31.8" height="4.8" fill="#86a3c2" stroke="none" stroke-width="1" />
<text x="0.0" y="0.0" font-size="4.9" text-anchor="middle" font-weight="bold" fill="#1b2640" stroke="#1b2640" stroke-width="0.08" >STAND 71-76</text>
</g>
<g transform="translate(919 399) rotate(-90)">
<rect x="-15.9" y="-3.9" width="31.8" height="4.8" fill="#86a3c2" stroke="none" stroke-width="1" />
<text x="0.0" y="0.0" font-size="4.9" text-anchor="middle" font-weight="bold" fill="#1b2640" stroke="#1b2640" stroke-width="0.08" >STAND 81-84</text>
</g>
<g transform="translate(946.500 420) rotate(-90)">
<text x="0.0" y="0.0" font-size="3" text-anchor="middle" font-weight="bold" fill="#445" stroke="#445" stroke-width="0.08" >ENGINE</text>
<text x="0.0" y="3.2" font-size="3" text-anchor="middle" font-weight="bold" fill="#445" stroke="#445" stroke-width="0.08" >RUN AREA</text>
</g>
<text x="859.3" y="360.9" font-size="3.6" text-anchor="middle" font-weight="bold" fill="#444" stroke="#444" stroke-width="0.08" >GENERAL</text>
<text x="859.3" y="365.8" font-size="3.6" text-anchor="middle" font-weight="bold" fill="#444" stroke="#444" stroke-width="0.08" >AVIATION</text>
<path d="M242.700 456H248.500L264 478.600" stroke="#000" stroke-width="1.05" fill="none" />
<rect x="207.8" y="447.4" width="34.9" height="17.2" fill="#fff" stroke="#000" stroke-width="1.05" />
<rect x="214.5" y="450.6" width="21.5" height="5.1" fill="#a0c3e2" stroke="none" stroke-width="1" />
<text x="225.2" y="454.8" font-size="5.2" text-anchor="middle" font-weight="bold" fill="#1b2640" stroke="#1b2640" stroke-width="0.08" >ILS LOC</text>
<rect x="213.3" y="456.8" width="23.8" height="5.1" fill="#a0c3e2" stroke="none" stroke-width="1" />
<text x="225.2" y="460.9" font-size="5.2" text-anchor="middle" font-weight="bold" fill="#1b2640" stroke="#1b2640" stroke-width="0.08" >ILC 110.3</text>
<circle cx="265.200" cy="480.700" r="3.400" fill="none" stroke="#000" stroke-width="1.100"/>
<path d="M263.0 482.6L268.0 482.6" stroke="#000" stroke-width="1.4" fill="none" />
<rect x="243.5" y="486.7" width="24.0" height="5.2" fill="#a0c3e2" stroke="none" stroke-width="1" />
<text x="244.0" y="490.9" font-size="5.3" text-anchor="start" font-weight="bold" fill="#1b2640" stroke="#1b2640" stroke-width="0.08" >Localizer</text>
<rect x="276.4" y="466.3" width="95.6" height="28.2" fill="none" stroke="#000" stroke-width="1.1" stroke-dasharray="2.600 1.200"/>
<rect x="333.0" y="472.3" width="13.5" height="16.9" fill="none" stroke="#000" stroke-width="1.1" stroke-dasharray="2.600 1.200"/>
<rect x="354.0" y="472.8" width="17.0" height="14.7" fill="none" stroke="#000" stroke-width="0.9" />
<rect x="276.7" y="467.3" width="51.6" height="5.1" fill="#a0c3e2" stroke="none" stroke-width="1" />
<text x="302.5" y="471.5" font-size="5.2" text-anchor="middle" font-weight="bold" fill="#1b2640" stroke="#1b2640" stroke-width="0.08" >SIMPLE APPROACH</text>
<rect x="278.2" y="473.5" width="48.7" height="5.1" fill="#a0c3e2" stroke="none" stroke-width="1" />
<text x="302.5" y="477.7" font-size="5.2" text-anchor="middle" font-weight="bold" fill="#1b2640" stroke="#1b2640" stroke-width="0.08" >LIGHTING SYSTEM</text>
<path d="M269 517.500H274.400L287 493.300" stroke="#000" stroke-width="1.05" fill="none" />
<rect x="236.5" y="509.8" width="32.5" height="16.4" fill="#fff" stroke="#000" stroke-width="1.05" />
<rect x="246.2" y="512.6" width="13.1" height="5.1" fill="#a0c3e2" stroke="none" stroke-width="1" />
<text x="252.8" y="516.8" font-size="5.2" text-anchor="middle" font-weight="bold" fill="#1b2640" stroke="#1b2640" stroke-width="0.08" >CWY</text>
<rect x="241.8" y="518.8" width="21.8" height="5.1" fill="#a0c3e2" stroke="none" stroke-width="1" />
<text x="252.8" y="522.9" font-size="5.2" text-anchor="middle" font-weight="bold" fill="#1b2640" stroke="#1b2640" stroke-width="0.08" >506X150</text>
<path d="M316.6 503.0L333.8 481.8" stroke="#000" stroke-width="1.05" fill="none" />
<rect x="290.3" y="497.4" width="26.3" height="18.1" fill="#fff" stroke="#000" stroke-width="1.05" />
<rect x="295.7" y="498.0" width="15.4" height="5.1" fill="#a0c3e2" stroke="none" stroke-width="1" />
<text x="303.5" y="502.2" font-size="5.2" text-anchor="middle" font-weight="bold" fill="#1b2640" stroke="#1b2640" stroke-width="0.08" >RESA</text>
<text x="303.5" y="508.3" font-size="5.2" text-anchor="middle" fill="#333" stroke="#333" stroke-width="0.13" >90X90</text>
<text x="303.5" y="514.5" font-size="5.2" text-anchor="middle" fill="#333" stroke="#333" stroke-width="0.13" >GRADE</text>
<path d="M352.800 520.500H356L364.100 485" stroke="#000" stroke-width="1.05" fill="none" />
<rect x="329.8" y="516.7" width="23.0" height="24.8" fill="#fff" stroke="#000" stroke-width="1.05" />
<rect x="334.9" y="520.3" width="12.8" height="5.1" fill="#a0c3e2" stroke="none" stroke-width="1" />
<text x="341.3" y="524.5" font-size="5.2" text-anchor="middle" font-weight="bold" fill="#1b2640" stroke="#1b2640" stroke-width="0.08" >SWY</text>
<rect x="333.6" y="526.8" width="15.4" height="5.1" fill="#a0c3e2" stroke="none" stroke-width="1" />
<text x="341.3" y="531.0" font-size="5.2" text-anchor="middle" font-weight="bold" fill="#1b2640" stroke="#1b2640" stroke-width="0.08" >ASPH</text>
<rect x="333.3" y="533.3" width="16.0" height="5.1" fill="#a0c3e2" stroke="none" stroke-width="1" />
<text x="341.3" y="537.5" font-size="5.2" text-anchor="middle" font-weight="bold" fill="#1b2640" stroke="#1b2640" stroke-width="0.08" >58X45</text>
<path d="M304.0 436.0L370.5 469.0" stroke="#000" stroke-width="1.3" fill="none" />
<rect x="287.0" y="424.5" width="17.0" height="22.7" fill="#fff" stroke="#000" stroke-width="1.05" />
<text x="295.5" y="434.8" font-size="5.3" text-anchor="middle" fill="#333" stroke="#333" stroke-width="0.13" >LCA</text>
<text x="295.5" y="440.8" font-size="5.3" text-anchor="middle" fill="#333" stroke="#333" stroke-width="0.13" >112.8</text>
<circle cx="368.200" cy="467.600" r="3.300" fill="none" stroke="#000" stroke-width="1.100"/>
<path d="M364 470.500l5 -6l2 4z" stroke="none" stroke-width="1" fill="#000" />
<rect x="375.0" y="488.1" width="24.8" height="3.3" fill="#a0c3e2" stroke="none" stroke-width="1" />
<text x="375.5" y="490.8" font-size="3.4" text-anchor="start" font-weight="bold" fill="#1b2640" stroke="#1b2640" stroke-width="0.08" >THR ELEV 11ft</text>
<path d="M961.6 421.0L950.0 427.0" stroke="#000" stroke-width="1.05" fill="none" />
<rect x="961.6" y="413.1" width="42.2" height="15.8" fill="#fff" stroke="#000" stroke-width="1.05" />
<rect x="965.9" y="415.6" width="33.6" height="5.1" fill="#a0c3e2" stroke="none" stroke-width="1" />
<text x="982.7" y="419.8" font-size="5.2" text-anchor="middle" font-weight="bold" fill="#1b2640" stroke="#1b2640" stroke-width="0.08" >ENGINE RUN</text>
<rect x="974.8" y="421.8" width="15.7" height="5.1" fill="#a0c3e2" stroke="none" stroke-width="1" />
<text x="982.7" y="425.9" font-size="5.2" text-anchor="middle" font-weight="bold" fill="#1b2640" stroke="#1b2640" stroke-width="0.08" >AREA</text>
<path d="M978.600 438H967.300L949.400 466.600" stroke="#000" stroke-width="1.05" fill="none" />
<rect x="978.6" y="430.8" width="28.2" height="13.9" fill="#fff" stroke="#000" stroke-width="1.05" />
<rect x="986.1" y="432.4" width="13.1" height="5.1" fill="#a0c3e2" stroke="none" stroke-width="1" />
<text x="992.7" y="436.6" font-size="5.2" text-anchor="middle" font-weight="bold" fill="#1b2640" stroke="#1b2640" stroke-width="0.08" >CWY</text>
<rect x="981.8" y="438.5" width="21.8" height="5.1" fill="#a0c3e2" stroke="none" stroke-width="1" />
<text x="992.7" y="442.7" font-size="5.2" text-anchor="middle" font-weight="bold" fill="#1b2640" stroke="#1b2640" stroke-width="0.08" >257X150</text>
<rect x="899.6" y="432.7" width="17.7" height="16.9" fill="#fff" stroke="#000" stroke-width="1.1" />
<text x="908.5" y="440.0" font-size="6.8" text-anchor="middle" fill="#222" stroke="#222" stroke-width="0.13" >LCA</text>
<text x="908.5" y="447.4" font-size="6.8" text-anchor="middle" fill="#222" stroke="#222" stroke-width="0.13" >112.8</text>
<path d="M917.3 447.0L922.0 450.5" stroke="#000" stroke-width="1.2" fill="none" />
<circle cx="926.500" cy="452" r="3" fill="#fff" stroke="#000" stroke-width="1.100"/>
<path d="M915 452l8 -3v6z" stroke="none" stroke-width="1" fill="#000" />
<path d="M921.0 452.0L930.0 452.0" stroke="#000" stroke-width="1.2" fill="none" />
<rect x="817.6" y="457.8" width="32.7" height="16.2" fill="#fff" stroke="#000" stroke-width="1.1" />
<text x="834.0" y="461.8" font-size="3.6" text-anchor="middle" fill="#333" stroke="#333" stroke-width="0.13" >ARP</text>
<text x="834.0" y="467.3" font-size="3.8" text-anchor="middle" fill="#333" stroke="#333" stroke-width="0.13" >34°52'44.00"N</text>
<text x="834.0" y="472.3" font-size="3.8" text-anchor="middle" fill="#333" stroke="#333" stroke-width="0.13" >033°37'49.00"E</text>
<path d="M814.8 465.7L808.5 478.5" stroke="#000" stroke-width="1.05" fill="none" />
<circle cx="809" cy="481.200" r="2.800" fill="#fff" stroke="#000" stroke-width="1.100"/>
<path d="M805.5 481.2L812.5 481.2" stroke="#000" stroke-width="1" fill="none" />
<path d="M809.0 477.7L809.0 484.7" stroke="#000" stroke-width="1" fill="none" />
<text x="790.0" y="483.8" font-size="7" text-anchor="start" fill="#222" stroke="#222" stroke-width="0.13" >ARP</text>
<rect x="910.5" y="466.5" width="48.1" height="29.3" fill="none" stroke="#000" stroke-width="1.1" stroke-dasharray="2.600 1.200"/>
<rect x="921.3" y="472.2" width="18.5" height="17.3" fill="none" stroke="#000" stroke-width="1.1" stroke-dasharray="2.600 1.200"/>
<rect x="962.2" y="471.7" width="51.6" height="5.1" fill="#a0c3e2" stroke="none" stroke-width="1" />
<text x="962.7" y="475.9" font-size="5.2" text-anchor="start" font-weight="bold" fill="#1b2640" stroke="#1b2640" stroke-width="0.08" >SIMPLE APPROACH</text>
<rect x="963.9" y="478.6" width="48.7" height="5.1" fill="#a0c3e2" stroke="none" stroke-width="1" />
<text x="964.4" y="482.8" font-size="5.2" text-anchor="start" font-weight="bold" fill="#1b2640" stroke="#1b2640" stroke-width="0.08" >LIGHTING SYSTEM</text>
<path d="M962.4 505.0L933.9 489.5" stroke="#000" stroke-width="1.05" fill="none" />
<rect x="962.4" y="501.3" width="21.4" height="22.5" fill="#fff" stroke="#000" stroke-width="1.05" />
<rect x="966.5" y="502.8" width="13.2" height="4.3" fill="#a0c3e2" stroke="none" stroke-width="1" />
<text x="973.1" y="506.3" font-size="4.4" text-anchor="middle" font-weight="bold" fill="#1b2640" stroke="#1b2640" stroke-width="0.08" >RESA</text>
<rect x="966.2" y="508.0" width="13.7" height="4.3" fill="#a0c3e2" stroke="none" stroke-width="1" />
<text x="973.1" y="511.5" font-size="4.4" text-anchor="middle" font-weight="bold" fill="#1b2640" stroke="#1b2640" stroke-width="0.08" >90X90</text>
<rect x="964.7" y="513.2" width="16.9" height="4.3" fill="#a0c3e2" stroke="none" stroke-width="1" />
<text x="973.1" y="516.7" font-size="4.4" text-anchor="middle" font-weight="bold" fill="#1b2640" stroke="#1b2640" stroke-width="0.08" >GRADE</text>
<rect x="966.5" y="518.4" width="13.2" height="4.3" fill="#a0c3e2" stroke="none" stroke-width="1" />
<text x="973.1" y="521.9" font-size="4.4" text-anchor="middle" font-weight="bold" fill="#1b2640" stroke="#1b2640" stroke-width="0.08" >ASPH</text>
<path d="M852.2 527.4L834.5 507.9" stroke="#000" stroke-width="1.05" fill="none" />
<rect x="852.0" y="514.8" width="18.6" height="26.0" fill="#fff" stroke="#000" stroke-width="1.05" />
<rect x="855.0" y="518.9" width="12.6" height="5.1" fill="#a0c3e2" stroke="none" stroke-width="1" />
<text x="861.3" y="523.1" font-size="5.2" text-anchor="middle" font-weight="bold" fill="#1b2640" stroke="#1b2640" stroke-width="0.08" >DME</text>
<rect x="856.6" y="525.5" width="9.4" height="5.1" fill="#a0c3e2" stroke="none" stroke-width="1" />
<text x="861.3" y="529.7" font-size="5.2" text-anchor="middle" font-weight="bold" fill="#1b2640" stroke="#1b2640" stroke-width="0.08" >ILC</text>
<rect x="856.2" y="532.1" width="10.3" height="5.1" fill="#a0c3e2" stroke="none" stroke-width="1" />
<text x="861.3" y="536.3" font-size="5.2" text-anchor="middle" font-weight="bold" fill="#1b2640" stroke="#1b2640" stroke-width="0.08" >40X</text>
<rect x="829.7" y="501.2" width="6.0" height="6.0" fill="#fff" stroke="#000" stroke-width="1.1" />
<rect x="831.5" y="503.4" width="2.5" height="1.6" fill="#000" stroke="none" stroke-width="1" />
<circle cx="821.500" cy="509.500" r="1.500" fill="#fff" stroke="#000" stroke-width="0.900"/>
<rect x="823.0" y="508.6" width="2.2" height="1.6" fill="#e8262a" stroke="none" stroke-width="1" />
<text x="860.3" y="501.8" font-size="3.3" text-anchor="middle" font-weight="bold" fill="#1d3557" stroke="#1d3557" stroke-width="0.08" >GLIDE - PATH</text>
<rect x="848.5" y="503.3" width="15.4" height="3.5" fill="#a0c3e2" stroke="none" stroke-width="1" />
<text x="849.0" y="506.2" font-size="3.6" text-anchor="start" font-weight="bold" fill="#1b2640" stroke="#1b2640" stroke-width="0.08" >Antenna</text>
<rect x="846.0" y="504.0" width="2.0" height="1.6" fill="#e8262a" stroke="none" stroke-width="1" />
<rect x="888.0" y="487.9" width="18.8" height="3.1" fill="#a0c3e2" stroke="none" stroke-width="1" />
<text x="888.5" y="490.5" font-size="3.2" text-anchor="start" font-weight="bold" fill="#1b2640" stroke="#1b2640" stroke-width="0.08" >DTHR / TDZ</text>
<rect x="888.0" y="491.9" width="14.2" height="3.1" fill="#a0c3e2" stroke="none" stroke-width="1" />
<text x="888.5" y="494.5" font-size="3.2" text-anchor="start" font-weight="bold" fill="#1b2640" stroke="#1b2640" stroke-width="0.08" >ELEV 7ft</text>
<rect x="766.5" y="512.6" width="14.6" height="6.7" fill="#a0c3e2" stroke="none" stroke-width="1" />
<text x="767.0" y="518.0" font-size="6.8" text-anchor="start" font-weight="bold" fill="#1b2640" stroke="#1b2640" stroke-width="0.08" >VDF</text>
<circle cx="785.600" cy="514.300" r="3.400" fill="#fff" stroke="#000" stroke-width="1.100"/>
<path d="M783.6 514.3L787.6 514.3" stroke="#000" stroke-width="1.6" fill="none" />
<rect x="797.5" y="513.9" width="12.8" height="5.5" fill="#a0c3e2" stroke="none" stroke-width="1" />
<text x="798.0" y="518.4" font-size="5.6" text-anchor="start" font-weight="bold" fill="#1b2640" stroke="#1b2640" stroke-width="0.08" >RVR</text>
<rect x="797.5" y="521.4" width="35.2" height="5.5" fill="#a0c3e2" stroke="none" stroke-width="1" />
<text x="798.0" y="525.9" font-size="5.6" text-anchor="start" font-weight="bold" fill="#1b2640" stroke="#1b2640" stroke-width="0.08" >Anemometer</text>
<rect x="423.4" y="516.4" width="12.8" height="5.5" fill="#a0c3e2" stroke="none" stroke-width="1" />
<text x="423.9" y="520.9" font-size="5.6" text-anchor="start" font-weight="bold" fill="#1b2640" stroke="#1b2640" stroke-width="0.08" >RVR</text>
<rect x="423.4" y="523.2" width="35.2" height="5.5" fill="#a0c3e2" stroke="none" stroke-width="1" />
<text x="423.9" y="527.7" font-size="5.6" text-anchor="start" font-weight="bold" fill="#1b2640" stroke="#1b2640" stroke-width="0.08" >Anemometer</text>
<circle cx="433.500" cy="510.600" r="1.600" fill="#fff" stroke="#000" stroke-width="0.900"/>
<rect x="435.2" y="509.6" width="2.4" height="1.8" fill="#e8262a" stroke="none" stroke-width="1" />
<path d="M406 535Q408 518 417 517L422 516" stroke="#c4c4c4" stroke-width="0.9" fill="none" />
<path d="M622 519Q632 515 640 524" stroke="#c4c4c4" stroke-width="0.9" fill="none" />
<path d="M461.0 516.5L571.0 516.5" stroke="#c0c0c0" stroke-width="0.9" fill="none" />
<path d="M651.0 520.0L651.0 565.5" stroke="#b0b0b0" stroke-width="1.3" fill="none" />
<text x="572.0" y="492.7" font-size="5.2" text-anchor="start" fill="#222" stroke="#222" stroke-width="0.13" >2994 x 45 ASPHALT</text>
<rect x="572.5" y="511.5" width="44.4" height="5.1" fill="#a0c3e2" stroke="none" stroke-width="1" />
<text x="573.0" y="515.7" font-size="5.2" text-anchor="start" font-weight="bold" fill="#1b2640" stroke="#1b2640" stroke-width="0.08" >STRIP 3112 X 280</text>
<rect x="645.5" y="511.4" width="15.3" height="6.5" fill="#a0c3e2" stroke="none" stroke-width="1" />
<text x="646.0" y="516.7" font-size="6.6" text-anchor="start" font-weight="bold" fill="#1b2640" stroke="#1b2640" stroke-width="0.08" >VOR</text>
<rect x="663.5" y="511.3" width="6.0" height="6.0" fill="#fff" stroke="#000" stroke-width="1.1" />
<circle cx="666.500" cy="514.300" r="1.300" fill="#000"/>
<path d="M668.500 517.500L688.200 539H691.600" stroke="#000" stroke-width="1.05" fill="none" />
<rect x="691.6" y="528.0" width="33.3" height="23.0" fill="#fff" stroke="#000" stroke-width="1.05" />
<rect x="696.1" y="530.8" width="24.3" height="4.9" fill="#a0c3e2" stroke="none" stroke-width="1" />
<text x="708.2" y="534.8" font-size="5" text-anchor="middle" font-weight="bold" fill="#1b2640" stroke="#1b2640" stroke-width="0.08" >VOR/DME</text>
<rect x="695.7" y="537.3" width="25.2" height="4.9" fill="#a0c3e2" stroke="none" stroke-width="1" />
<text x="708.2" y="541.3" font-size="5" text-anchor="middle" font-weight="bold" fill="#1b2640" stroke="#1b2640" stroke-width="0.08" >LCA 112.8</text>
<rect x="703.3" y="543.8" width="9.9" height="4.9" fill="#a0c3e2" stroke="none" stroke-width="1" />
<text x="708.2" y="547.8" font-size="5" text-anchor="middle" font-weight="bold" fill="#1b2640" stroke="#1b2640" stroke-width="0.08" >75X</text>
<rect x="675.0" y="557.3" width="23.7" height="3.7" fill="#a6c4df" stroke="none" stroke-width="1" />
<rect x="675.0" y="587.0" width="23.0" height="4.0" fill="#a6c4df" stroke="none" stroke-width="1" />
<circle cx="583" cy="596.700" r="3.200" fill="#fff" stroke="#000" stroke-width="1.100"/>
<path d="M581.0 596.7L585.0 596.7" stroke="#000" stroke-width="1.6" fill="none" />
<rect x="576.5" y="601.6" width="20.9" height="5.4" fill="#a0c3e2" stroke="none" stroke-width="1" />
<text x="577.0" y="606.0" font-size="5.5" text-anchor="start" font-weight="bold" fill="#1b2640" stroke="#1b2640" stroke-width="0.08" >RADAR</text>
<path d="M871.600 316H866.200L852.800 355.600" stroke="#000" stroke-width="1.05" fill="none" />
<rect x="871.6" y="308.5" width="51.1" height="15.2" fill="#fff" stroke="#000" stroke-width="1.05" />
<rect x="881.8" y="310.7" width="26.4" height="5.1" fill="#a0c3e2" stroke="none" stroke-width="1" />
<text x="895.0" y="314.9" font-size="5.2" text-anchor="middle" font-weight="bold" fill="#1b2640" stroke="#1b2640" stroke-width="0.08" >GENERAL</text>
<rect x="882.1" y="316.9" width="25.8" height="5.1" fill="#a0c3e2" stroke="none" stroke-width="1" />
<text x="895.0" y="321.0" font-size="5.2" text-anchor="middle" font-weight="bold" fill="#1b2640" stroke="#1b2640" stroke-width="0.08" >AVIATION</text>
<path d="M967.7 353.9L964.5 384.6" stroke="#000" stroke-width="1.05" fill="none" />
<rect x="945.5" y="345.9" width="58.6" height="8.0" fill="#fff" stroke="#000" stroke-width="1.05" />
<rect x="948.1" y="347.7" width="53.5" height="4.9" fill="#a0c3e2" stroke="none" stroke-width="1" />
<text x="974.8" y="351.7" font-size="5" text-anchor="middle" font-weight="bold" fill="#1b2640" stroke="#1b2640" stroke-width="0.08" >MAINTENANCE AREA</text>
<path d="M543.0 368.1L560.0 400.0" stroke="#000" stroke-width="1.05" fill="none" />
<rect x="520.9" y="357.8" width="19.0" height="20.5" fill="#fff" stroke="#000" stroke-width="1.05" />
<text x="530.4" y="363.8" font-size="5.2" text-anchor="middle" fill="#333" stroke="#333" stroke-width="0.13" >AIS</text>
<text x="530.4" y="369.9" font-size="5.2" text-anchor="middle" fill="#333" stroke="#333" stroke-width="0.13" >MET</text>
<text x="530.4" y="376.1" font-size="5.2" text-anchor="middle" fill="#333" stroke="#333" stroke-width="0.13" >TWR</text>
<path d="M570.6 380.0L581.3 399.7" stroke="#000" stroke-width="1.05" fill="none" />
<rect x="554.7" y="377.5" width="15.9" height="6.9" fill="#fff" stroke="#000" stroke-width="1.05" />
<text x="562.7" y="382.8" font-size="5" text-anchor="middle" fill="#333" stroke="#333" stroke-width="0.13" >FFS</text>
<path d="M594.800 342.200H592L575.900 371.700" stroke="#000" stroke-width="1.05" fill="none" />
<rect x="594.8" y="332.3" width="19.4" height="21.0" fill="#fff" stroke="#000" stroke-width="1.05" />
<text x="604.5" y="341.2" font-size="3.8" text-anchor="middle" fill="#333" stroke="#333" stroke-width="0.13" >POLICE</text>
<text x="604.5" y="347.1" font-size="3.8" text-anchor="middle" fill="#333" stroke="#333" stroke-width="0.13" >AIRWING</text>
<g transform="translate(673.700 253) rotate(-45)">
<text x="0.0" y="0.0" font-size="8.5" text-anchor="start" fill="#222" letter-spacing="2">VAR 5°E 2020</text>
<text x="0.0" y="12.0" font-size="8.5" text-anchor="start" fill="#222" letter-spacing="2">ANNUAL RATE</text>
<text x="0.0" y="24.0" font-size="8.5" text-anchor="start" fill="#222" letter-spacing="2">OF CHANGE 4.5°E</text>
</g>
<path d="M702.0 273.5L744.5 226.0" stroke="#000" stroke-width="1.4" fill="none" />
<path d="M702.0 273.5L741.0 234.5" stroke="#000" stroke-width="1.2" fill="none" />
<path d="M747 223l-5.500 2.200l3.400 3z" stroke="none" stroke-width="1" fill="#000" />
<path d="M743.500 232l-5.500 1.800l3.200 3.200z" stroke="none" stroke-width="1" fill="#000" />
<g transform="translate(921 546) rotate(-33)">
<text x="0.0" y="0.0" font-size="6.6" text-anchor="middle" fill="#1d2a44" stroke="#1d2a44" stroke-width="0.13" >MEDITERRANEAN SEA</text>
</g>
<rect x="939.6" y="587.7" width="33.9" height="7.7" fill="#a0c3e2" stroke="none" stroke-width="1" />
<text x="956.6" y="594.0" font-size="7.9" text-anchor="middle" fill="#1b2640" >METRES</text>
<rect x="922.4" y="597.2" width="93.0" height="4.3" fill="#a0c3e2" stroke="none" stroke-width="1" />
<rect x="864.9" y="597.1" width="9.3" height="4.9" fill="#a0c3e2" stroke="none" stroke-width="1" />
<text x="869.6" y="601.1" font-size="5" text-anchor="middle" fill="#1b2640" stroke="#1b2640" stroke-width="0.13" >150</text>
<rect x="896.1" y="597.1" width="3.8" height="4.9" fill="#a0c3e2" stroke="none" stroke-width="1" />
<text x="898.0" y="601.1" font-size="5" text-anchor="middle" fill="#1b2640" stroke="#1b2640" stroke-width="0.13" >0</text>
<rect x="921.5" y="597.1" width="9.3" height="4.9" fill="#a0c3e2" stroke="none" stroke-width="1" />
<text x="926.2" y="601.1" font-size="5" text-anchor="middle" fill="#1b2640" stroke="#1b2640" stroke-width="0.13" >150</text>
<rect x="950.5" y="597.1" width="9.3" height="4.9" fill="#a0c3e2" stroke="none" stroke-width="1" />
<text x="955.2" y="601.1" font-size="5" text-anchor="middle" fill="#1b2640" stroke="#1b2640" stroke-width="0.13" >300</text>
<rect x="978.6" y="597.1" width="9.3" height="4.9" fill="#a0c3e2" stroke="none" stroke-width="1" />
<text x="983.3" y="601.1" font-size="5" text-anchor="middle" fill="#1b2640" stroke="#1b2640" stroke-width="0.13" >450</text>
<rect x="1006.9" y="597.1" width="9.3" height="4.9" fill="#a0c3e2" stroke="none" stroke-width="1" />
<text x="1011.6" y="601.1" font-size="5" text-anchor="middle" fill="#1b2640" stroke="#1b2640" stroke-width="0.13" >600</text>
<path d="M869.6 605.7L1011.6 605.7" stroke="#000" stroke-width="1.3" fill="none" />
<path d="M872.4 605.7L872.4 609.0" stroke="#000" stroke-width="0.9" fill="none" />
<path d="M875.3 605.7L875.3 609.0" stroke="#000" stroke-width="0.9" fill="none" />
<path d="M878.1 605.7L878.1 609.0" stroke="#000" stroke-width="0.9" fill="none" />
<path d="M881.0 605.7L881.0 609.0" stroke="#000" stroke-width="0.9" fill="none" />
<path d="M883.8 605.7L883.8 609.0" stroke="#000" stroke-width="0.9" fill="none" />
<path d="M886.6 605.7L886.6 609.0" stroke="#000" stroke-width="0.9" fill="none" />
<path d="M889.5 605.7L889.5 609.0" stroke="#000" stroke-width="0.9" fill="none" />
<path d="M892.3 605.7L892.3 609.0" stroke="#000" stroke-width="0.9" fill="none" />
<path d="M895.2 605.7L895.2 609.0" stroke="#000" stroke-width="0.9" fill="none" />
<path d="M869.6 602.5L869.6 609.0" stroke="#000" stroke-width="1.3" fill="none" />
<path d="M898.0 602.5L898.0 609.0" stroke="#000" stroke-width="1.3" fill="none" />
<path d="M926.2 602.5L926.2 609.0" stroke="#000" stroke-width="1.3" fill="none" />
<path d="M954.7 602.5L954.7 609.0" stroke="#000" stroke-width="1.3" fill="none" />
<path d="M983.3 602.5L983.3 609.0" stroke="#000" stroke-width="1.3" fill="none" />
<path d="M1011.6 602.5L1011.6 609.0" stroke="#000" stroke-width="1.3" fill="none" />
</g>
</svg>
<!--/CHART-->
<div id="toolbar">
 <svg width="1325" height="57" viewBox="0 4 1325 57">
  <g fill="#fff">
   <rect x="25" y="26" width="16" height="2"/><rect x="25" y="31" width="16" height="2"/><rect x="25" y="36" width="16" height="2"/>
   <rect x="613" y="31" width="12" height="2"/>
   <rect x="697" y="31" width="12" height="2"/><rect x="702" y="26" width="2" height="12"/>
   <circle cx="1294" cy="27.2" r="1.9"/><circle cx="1294" cy="32.2" r="1.9"/><circle cx="1294" cy="37.2" r="1.9"/>
  </g>
  <rect x="598" y="25" width="1" height="15" fill="#4a4e51"/><rect x="723" y="25" width="1" height="15" fill="#4a4e51"/>
  <!-- fit to page -->
  <g fill="none" stroke="#fff" stroke-width="2">
   <rect x="744" y="25.2" width="16" height="13.8" rx="1.5"/>
  </g>
  <path d="M752 27.6l2.6 3h-5.2zM752 36.6l2.6-3h-5.2z" fill="#fff"/>
  <!-- rotate -->
  <g fill="none" stroke="#fff" stroke-width="1.8">
   <path d="M781.3 27.5l4.6 4.6-4.6 4.6-4.6-4.600z" stroke-linejoin="miter"/>
   <path d="M784.5 25.2a7 7 0 1 1 -1.5 13.900"/>
  </g>
  <path d="M785.5 22.300v6l-3.600-3z" fill="#fff"/>
  <!-- download -->
  <path d="M1221 23v11" stroke="#fff" stroke-width="2" fill="none"/>
  <path d="M1216 29.500l5 5 5-5" stroke="#fff" stroke-width="2" fill="none"/>
  <path d="M1213 33.500v6h18v-6" stroke="#fff" stroke-width="2" fill="none"/>
  <!-- print -->
  <path d="M1253 24.500h10.500v3h-10.500z" fill="#fff"/>
  <path d="M1252.300 28.500h11.900a2.600 2.600 0 0 1 2.600 2.600v5.400h-3.300v-3h-10.500v3h-3.300v-5.400a2.600 2.600 0 0 1 2.600-2.600z" fill="#fff"/>
  <path d="M1254 34.500h8.500v4.500h-8.500z" fill="none" stroke="#fff" stroke-width="1.600"/>
  <circle cx="1264" cy="31" r="0.900" fill="#323639"/>
 </svg>
 <div class="title">AIP</div>
 <div class="box" style="left:527px;top:20px;width:23px;height:17px;line-height:18px;">1</div>
 <div class="tb" style="left:556px;top:21px;">/</div>
 <div class="tb" style="left:567px;top:21px;">1</div>
 <div class="box" style="left:639px;top:20px;width:44px;height:17px;line-height:18px;">75%</div>
</div>
<div id="scroll"><div id="thumb"></div><svg width="14" height="548" viewBox="0 0 14 548"><path d="M4 8.300L7.300 4.600L10.600 8.300" stroke="#d8d8d8" stroke-width="1.800" fill="none"/><path d="M4 543L7.300 546.700L10.600 543" stroke="#9a9a9a" stroke-width="1.800" fill="none"/></svg></div>
</body></html>
